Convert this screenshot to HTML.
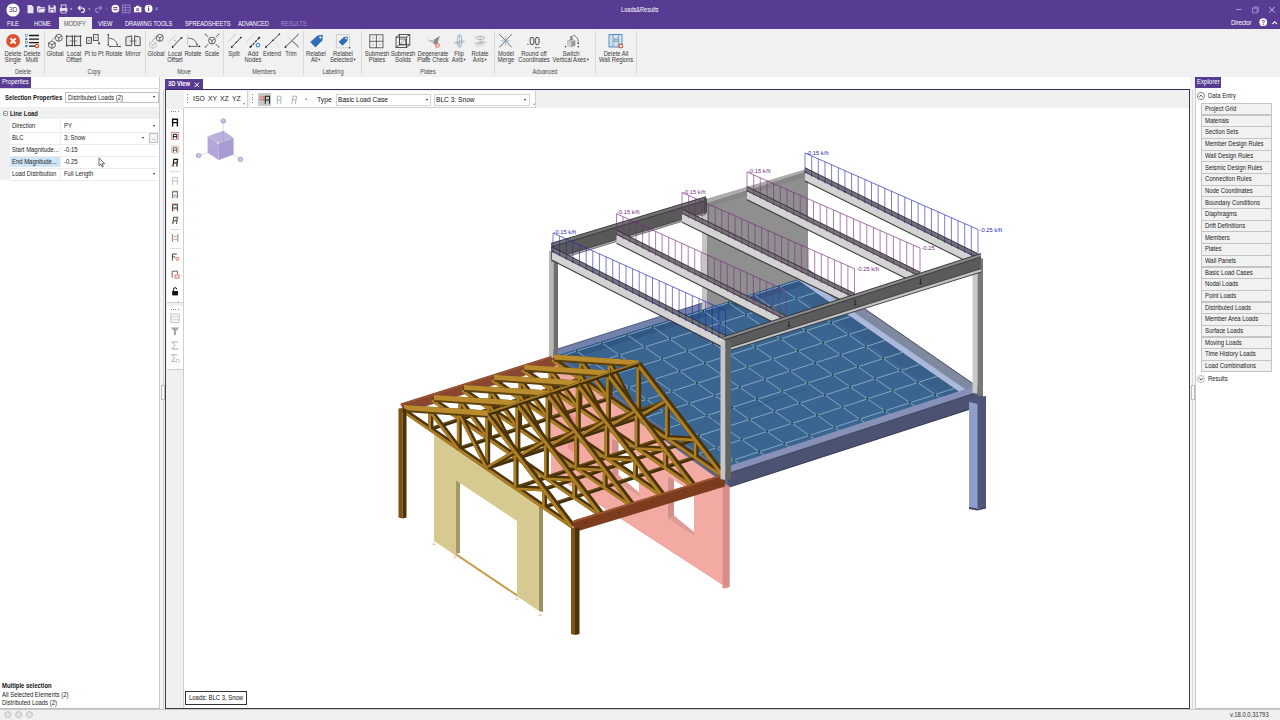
<!DOCTYPE html>
<html lang="en">
<head>
<meta charset="utf-8">
<title>Loads&amp;Results</title>
<style>
*{box-sizing:border-box;margin:0;padding:0}
html,body{width:1280px;height:720px;overflow:hidden;background:#f0f0f0;font-family:"Liberation Sans",sans-serif;color:#3c3c3c}
.abs{position:absolute}
#app{position:relative;width:1280px;height:720px;overflow:hidden;background:#f0f0f0}
#titlebar{position:absolute;left:0;top:0;width:1280px;height:28.5px;background:#583b93}
#title{position:absolute;left:0;width:1280px;top:5.8px;text-align:center;font-size:6.5px;color:#fff;line-height:8px}
.tab{position:absolute;top:19px;height:9px;font-size:6.6px;line-height:9px;color:#fff;white-space:nowrap;letter-spacing:-0.1px;transform-origin:0 50%}
#tabmod{position:absolute;left:59px;top:17px;width:33px;height:12px;background:#f1f1f1}
#ribbon{position:absolute;left:0;top:28.5px;width:1280px;height:47.5px;background:#f1f1f1}
.rl{position:absolute;font-size:6.8px;line-height:6.8px;color:#383838;text-align:center;white-space:nowrap;transform:translateX(-50%)}
.gl{position:absolute;top:68.2px;font-size:6.7px;line-height:7px;color:#4a4a4a;text-align:center;white-space:nowrap;transform:translateX(-50%)}
.sep{position:absolute;top:31px;width:1px;height:44px;background:#dadada}
.ico{position:absolute;overflow:visible}
#below{position:absolute;left:0;top:76px;width:1280px;height:634px;background:#f0f0f0}
#props{position:absolute;left:0;top:77px;width:160px;height:632px;background:#fff;border-right:1px solid #c9c9c9;border-bottom:1px solid #bdbdbd}
.ptab{position:absolute;background:#583b93;color:#fff;font-size:7px;line-height:10px;height:11px;padding-left:2px;white-space:nowrap}
.pt{position:absolute;font-size:6.8px;line-height:8px;color:#222;white-space:nowrap}
.b{font-weight:bold}
.rowline{position:absolute;left:10px;width:148px;height:1px;background:#ececec}
.arr{position:absolute;width:0;height:0;border-left:1.6px solid transparent;border-right:1.6px solid transparent;border-top:2px solid #222}
#view{position:absolute;left:165px;top:77px;width:1025px;height:632px;background:#fff}
#explorer{position:absolute;left:1195px;top:77px;width:85px;height:632px;background:#fff;border-left:1px solid #c9c9c9;border-bottom:1px solid #bdbdbd}
.ei{position:absolute;left:6px;width:71px;height:12px;background:#f0f0f0;border:1px solid #c6c6c6;font-size:6.1px;line-height:10.5px;padding-left:3px;color:#222;white-space:nowrap;overflow:hidden}
#status{position:absolute;left:0;top:710px;width:1280px;height:10px;background:#f0f0f0}
</style>
</head>
<body>
<div id="app">

<div id="titlebar">
<div id="title"><span style="display:inline-block;transform:scaleX(.86)">Loads&amp;Results</span></div>
<svg class="ico" style="left:6px;top:3px" width="14" height="14" viewBox="0 0 14 14"><circle cx="7" cy="7" r="6.6" fill="#fff"/><text x="7" y="9.4" font-size="6.6" text-anchor="middle" fill="#4a3580" font-family="Liberation Sans, sans-serif" textLength="8.6" lengthAdjust="spacingAndGlyphs">3D</text></svg>
<svg class="ico" style="left:24px;top:3px" width="70" height="14" viewBox="24 3 70 14">
<path d="M27.5 5h4l2 2v6.3h-6z" fill="#e6e0f0"/>
<path d="M37 6.2h3l.8 1h4v1H39l-1.6 4.4H37z" fill="#e6e0f0"/><path d="M39.4 8.8h6.2l-1.5 3.8h-6.2z" fill="#e6e0f0"/>
<path d="M48.4 5.2h6.4l1 1v6.4h-7.4z" fill="#e6e0f0"/><rect x="50" y="5.2" width="3.6" height="2.3" fill="#583b93"/><rect x="49.8" y="9.2" width="4.6" height="3.4" fill="#583b93"/><rect x="50.4" y="9.8" width="3.4" height="2.8" fill="#e6e0f0"/>
<rect x="59.8" y="8" width="7.6" height="3.6" rx=".6" fill="#e6e0f0"/><rect x="61.2" y="5" width="4.8" height="3.4" fill="none" stroke="#e6e0f0" stroke-width=".9"/><rect x="61.2" y="10.4" width="4.8" height="2.6" fill="#583b93" stroke="#e6e0f0" stroke-width=".8"/>
<path d="M69.8 8.6h2.6l-1.3 1.5z" fill="#e6e0f0"/>
<path d="M80.5 5.8l-2.2 2.2 2.2 2.2M78.6 8h3.6a2.1 2.1 0 0 1 0 4.3h-1" fill="none" stroke="#fff" stroke-width="1.2"/>
<path d="M88.2 8.6h2.2l-1.1 1.3z" fill="#e6e0f0"/>
</svg>
<svg class="ico" style="left:94px;top:3px" width="70" height="14" viewBox="94 3 70 14">
<path d="M99.5 5.8l2.2 2.2-2.2 2.2M101.4 8h-3.6a2.1 2.1 0 0 0 0 4.3h1" fill="none" stroke="#9a86c4" stroke-width="1.2"/>
<path d="M105.6 8.8h1.8l-.9 1.1z" fill="#9a86c4"/>
<circle cx="115.4" cy="8.7" r="3.9" fill="#fff"/><rect x="113.2" y="7.2" width="4.4" height="1" fill="#583b93"/><rect x="113.2" y="9.2" width="4.4" height="1" fill="#583b93"/>
<rect x="122.6" y="5" width="7.4" height="7.8" fill="none" stroke="#a794cc" stroke-width=".8"/><path d="M122.6 7.6h7.4M122.6 10.2h7.4M125.4 5v7.8" stroke="#a794cc" stroke-width=".7"/>
<path d="M134 7h1.6l.8-1.2h2.6l.8 1.2h1.6v5.2H134z" fill="#fff"/><circle cx="137.7" cy="9.5" r="1.5" fill="#583b93"/><circle cx="137.7" cy="9.5" r=".7" fill="#fff"/>
<circle cx="148.6" cy="8.7" r="3.9" fill="#fff"/><rect x="148" y="8" width="1.2" height="3" fill="#583b93"/><rect x="148" y="6.2" width="1.2" height="1.2" fill="#583b93"/>
<path d="M155.6 8h2.2M155.6 9.6h2.2" stroke="#d8d0ea" stroke-width=".7"/>
</svg>
<svg class="ico" style="left:1230px;top:4px" width="50" height="26" viewBox="1230 4 50 26">
<path d="M1236 9.5h5.6" stroke="#a895cf" stroke-width="1"/>
<path d="M1252.6 8.2h4.6v4.6h-4.6zM1253.8 8.2v-1.2h4.6v4.6h-1.2" fill="none" stroke="#a895cf" stroke-width=".9"/>
<path d="M1269.2 7l5.4 5.4M1274.6 7l-5.4 5.4" stroke="#c9bbe6" stroke-width="1"/>
<circle cx="1263.2" cy="22.2" r="3.9" fill="#fff"/>
<text x="1263.2" y="24.6" font-size="6.4" font-weight="bold" text-anchor="middle" fill="#583b93" font-family="Liberation Sans, sans-serif">?</text>
<path d="M1272.4 24l2.3-2.3 2.3 2.3" fill="none" stroke="#fff" stroke-width="1.1"/>
</svg>
<div class="tab" style="left:1230.8px;top:18px;transform:scaleX(.92)">Director</div>
<div id="tabmod"></div>
<div class="tab" style="left:6.5px;color:#fff;transform:scaleX(.87)">FILE</div>
<div class="tab" style="left:33.5px;color:#fff;transform:scaleX(.87)">HOME</div>
<div class="tab" style="left:63.5px;color:#555;transform:scaleX(.87)">MODIFY</div>
<div class="tab" style="left:97.5px;color:#fff;transform:scaleX(.87)">VIEW</div>
<div class="tab" style="left:125px;color:#fff;transform:scaleX(.87)">DRAWING TOOLS</div>
<div class="tab" style="left:184.5px;color:#fff;transform:scaleX(.87)">SPREADSHEETS</div>
<div class="tab" style="left:238px;color:#fff;transform:scaleX(.87)">ADVANCED</div>
<div class="tab" style="left:281px;color:#a693cc;transform:scaleX(.87)">RESULTS</div>
</div>
<div id="ribbon"></div>
<div class="sep" style="left:44px"></div>
<div class="sep" style="left:144.5px"></div>
<div class="sep" style="left:222.5px"></div>
<div class="sep" style="left:302.5px"></div>
<div class="sep" style="left:361px"></div>
<div class="sep" style="left:493.5px"></div>
<div class="sep" style="left:595px"></div>
<div class="sep" style="left:636px"></div>
<div class="rl" style="left:13px;top:50.6px;transform:translateX(-50%) scaleX(.86)">Delete<br>Single</div>
<div class="rl" style="left:32.2px;top:50.6px;transform:translateX(-50%) scaleX(.86)">Delete<br>Multi</div>
<div class="rl" style="left:55px;top:50.6px;transform:translateX(-50%) scaleX(.86)">Global</div>
<div class="rl" style="left:73.5px;top:50.6px;transform:translateX(-50%) scaleX(.86)">Local<br>Offset</div>
<div class="rl" style="left:93.7px;top:50.6px;transform:translateX(-50%) scaleX(.86)">Pt to Pt</div>
<div class="rl" style="left:114px;top:50.6px;transform:translateX(-50%) scaleX(.86)">Rotate</div>
<div class="rl" style="left:133px;top:50.6px;transform:translateX(-50%) scaleX(.86)">Mirror</div>
<div class="rl" style="left:156px;top:50.6px;transform:translateX(-50%) scaleX(.86)">Global</div>
<div class="rl" style="left:174.6px;top:50.6px;transform:translateX(-50%) scaleX(.86)">Local<br>Offset</div>
<div class="rl" style="left:193.4px;top:50.6px;transform:translateX(-50%) scaleX(.86)">Rotate</div>
<div class="rl" style="left:212px;top:50.6px;transform:translateX(-50%) scaleX(.86)">Scale</div>
<div class="rl" style="left:234.3px;top:50.6px;transform:translateX(-50%) scaleX(.86)">Split</div>
<div class="rl" style="left:253px;top:50.6px;transform:translateX(-50%) scaleX(.86)">Add<br>Nodes</div>
<div class="rl" style="left:272.4px;top:50.6px;transform:translateX(-50%) scaleX(.86)">Extend</div>
<div class="rl" style="left:291.4px;top:50.6px;transform:translateX(-50%) scaleX(.86)">Trim</div>
<div class="rl" style="left:316.2px;top:50.6px;transform:translateX(-50%) scaleX(.86)">Relabel<br>All<span style="font-size:4px;vertical-align:1px">&#9660;</span></div>
<div class="rl" style="left:342.8px;top:50.6px;transform:translateX(-50%) scaleX(.86)">Relabel<br>Selected<span style="font-size:4px;vertical-align:1px">&#9660;</span></div>
<div class="rl" style="left:376.8px;top:50.6px;transform:translateX(-50%) scaleX(.86)">Submesh<br>Plates</div>
<div class="rl" style="left:403px;top:50.6px;transform:translateX(-50%) scaleX(.86)">Submesh<br>Solids</div>
<div class="rl" style="left:432.6px;top:50.6px;transform:translateX(-50%) scaleX(.86)">Degenerate<br>Plate Check</div>
<div class="rl" style="left:459.4px;top:50.6px;transform:translateX(-50%) scaleX(.86)">Flip<br>Axis<span style="font-size:4px;vertical-align:1px">&#9660;</span></div>
<div class="rl" style="left:480px;top:50.6px;transform:translateX(-50%) scaleX(.86)">Rotate<br>Axis<span style="font-size:4px;vertical-align:1px">&#9660;</span></div>
<div class="rl" style="left:505.6px;top:50.6px;transform:translateX(-50%) scaleX(.86)">Model<br>Merge</div>
<div class="rl" style="left:533.5px;top:50.6px;transform:translateX(-50%) scaleX(.86)">Round off<br>Coordinates</div>
<div class="rl" style="left:571.3px;top:50.6px;transform:translateX(-50%) scaleX(.86)">Switch<br>Vertical Axes<span style="font-size:4px;vertical-align:1px">&#9660;</span></div>
<div class="rl" style="left:615.5px;top:50.6px;transform:translateX(-50%) scaleX(.86)">Delete All<br>Wall Regions</div>
<div class="gl" style="left:22.8px;transform:translateX(-50%) scaleX(0.84)">Delete</div>
<div class="gl" style="left:94px;transform:translateX(-50%) scaleX(0.84)">Copy</div>
<div class="gl" style="left:184px;transform:translateX(-50%) scaleX(0.84)">Move</div>
<div class="gl" style="left:263.5px;transform:translateX(-50%) scaleX(0.84)">Members</div>
<div class="gl" style="left:332.5px;transform:translateX(-50%) scaleX(0.84)">Labeling</div>
<div class="gl" style="left:427.8px;transform:translateX(-50%) scaleX(0.84)">Plates</div>
<div class="gl" style="left:544.7px;transform:translateX(-50%) scaleX(0.84)">Advanced</div>
<svg class="ico" style="left:0;top:29px" width="640" height="22" viewBox="0 29 640 22" fill="none" stroke-linecap="butt">
<!-- Delete single -->
<circle cx="13.1" cy="40.9" r="6.9" fill="#dc5330"/>
<path d="M10.5 38.3l5.2 5.2M15.7 38.3l-5.2 5.2" stroke="#fff" stroke-width="1.9"/>
<!-- Delete multi -->
<g stroke="#1a1a1a" stroke-width="1.3"><path d="M29 35.5h10M29 39.2h10M29 42.6h10M29 46.1h6"/></g>
<rect x="25.3" y="34.5" width="2" height="2" stroke="#5a7a96" stroke-width=".6" fill="#fff"/><rect x="25.3" y="38.2" width="2" height="2" fill="#2a6a9a"/>
<rect x="25.3" y="41.6" width="2" height="2" stroke="#5a7a96" stroke-width=".6" fill="#fff"/><rect x="25.3" y="45.1" width="2" height="2" fill="#2a6a9a"/>
<circle cx="36.9" cy="46" r="1.7" fill="#fff" stroke="#dc5330" stroke-width="1.2"/>
<!-- Global (copy) -->
<g stroke="#444" stroke-width=".8">
<path d="M51.9 41l3.3 1.9v3.7l-3.3 1.9-3.3-1.9v-3.7zM48.6 42.9l3.3 1.8 3.3-1.8M51.9 44.7v3.8"/>
<circle cx="58.8" cy="37.8" r="3.5"/><path d="M56 36l2.8 1.8 2.8-1.8M58.8 37.8v3.4"/>
<path d="M51.5 40.2l3.8-3" stroke-dasharray="1 .8"/>
</g>
<!-- Local offset (copy) -->
<g stroke="#444" stroke-width=".9"><rect x="66.6" y="36.2" width="5.8" height="9.4" fill="#e4e6ea"/><rect x="74.6" y="36.2" width="6" height="9.4" fill="#e4e6ea"/><path d="M70 41h7" stroke-width=".6"/></g>
<g fill="#333"><rect x="65.9" y="35.5" width="1.4" height="1.4"/><rect x="71.7" y="35.5" width="1.4" height="1.4"/><rect x="65.9" y="44.9" width="1.4" height="1.4"/><rect x="71.7" y="44.9" width="1.4" height="1.4"/><rect x="73.9" y="35.5" width="1.4" height="1.4"/><rect x="79.9" y="35.5" width="1.4" height="1.4"/><rect x="73.9" y="44.9" width="1.4" height="1.4"/><rect x="79.9" y="44.9" width="1.4" height="1.4"/></g>
<!-- Pt to Pt -->
<g stroke="#444" stroke-width=".9"><rect x="86.6" y="37.4" width="4.8" height="6" fill="#dcdfe4"/><rect x="93.4" y="34.6" width="4.8" height="5.8" fill="#eef0f3"/></g>
<circle cx="89" cy="40.4" r=".5" fill="#333"/><circle cx="95.8" cy="37.5" r=".5" fill="#333"/>
<path d="M98 41l2.6 3.2-1.3-.1-.4 1.2z" fill="#111"/>
<!-- Rotate (copy) -->
<g stroke="#444" stroke-width=".8"><path d="M108.3 34.8v10.2M109.8 46.5h10.2M108.6 38.2c4.4 0 8.4 3 8.6 6.6"/></g>
<g fill="#333"><circle cx="108.3" cy="34.9" r=".8"/><circle cx="108.3" cy="44.9" r=".8"/><circle cx="110" cy="46.5" r=".8"/><circle cx="120" cy="46.5" r=".8"/><path d="M116.2 44.2l1.9-.2-.8 1.7z"/></g>
<!-- Mirror -->
<g stroke="#444" stroke-width=".9"><path d="M125.9 37.2l5.8-1.4v9.8h-5.8zM134.6 35.8l5.6 1.4v8.4h-5.6z" fill="#e4e6ea"/><path d="M129.5 41h7" stroke-width=".6"/></g>
<!-- Global (move) -->
<g stroke="#bcbcbc" stroke-width=".8"><path d="M152.9 41l3.3 1.9v3.7l-3.3 1.9-3.3-1.9v-3.7zM149.6 42.9l3.3 1.8 3.3-1.8M152.9 44.7v3.8"/></g>
<g stroke="#444" stroke-width=".8"><circle cx="159.8" cy="37.8" r="3.5"/><path d="M157 36l2.8 1.8 2.8-1.8M159.8 37.8v3.4"/><path d="M152.5 40.2l3.8-3" stroke-dasharray="1 .8"/></g>
<!-- Local offset (move) -->
<path d="M168.2 42.6l8.6-9" stroke="#bdbdbd" stroke-width=".7"/>
<path d="M172.6 47l8.8-9.2" stroke="#333" stroke-width=".9"/><circle cx="172.6" cy="47" r=".9" fill="#222"/><circle cx="181.4" cy="37.8" r=".9" fill="#222"/>
<path d="M174 39.6l1.6 1.6" stroke="#555" stroke-width=".6"/>
<!-- Rotate (move) -->
<path d="M187.6 34.8v10.6" stroke="#bdbdbd" stroke-width=".8"/>
<g stroke="#444" stroke-width=".8"><path d="M189.4 46.4h10.4M188.4 38.2c4.4 0 8.4 3 8.6 6.6"/></g>
<g fill="#333"><circle cx="189.6" cy="46.4" r=".8"/><circle cx="199.6" cy="46.4" r=".8"/><path d="M196 44.2l1.9-.2-.8 1.7z"/></g>
<!-- Scale -->
<g stroke="#444" stroke-width=".8"><circle cx="212" cy="40.6" r="3.4"/><path d="M209.4 39l2.6 1.6 2.6-1.6M212 40.6v3.2"/><path d="M205.4 34.2l3 3M218.8 34.2l-3 3M205.4 47l3-3M218.8 47l-3-3"/></g>
<g fill="#2a6aa8"><circle cx="205.4" cy="34.2" r=".7"/><circle cx="218.8" cy="34.2" r=".7"/><circle cx="205.4" cy="47" r=".7"/><circle cx="218.8" cy="47" r=".7"/></g>
<!-- Split -->
<path d="M227.6 42.4l8.6-9" stroke="#bdbdbd" stroke-width=".7"/>
<path d="M231.8 47l9-9.4" stroke="#333" stroke-width=".9"/><circle cx="231.8" cy="47" r=".9" fill="#222"/><circle cx="240.8" cy="37.6" r=".9" fill="#222"/><circle cx="236.3" cy="42.3" r=".7" fill="#222"/>
<!-- Add nodes -->
<path d="M246.2 42.4l8.6-9" stroke="#bdbdbd" stroke-width=".7"/>
<path d="M250.4 47l9-9.4" stroke="#222" stroke-width="1.2" stroke-dasharray="2.4 1"/><circle cx="250.4" cy="47" r=".9" fill="#222"/><circle cx="259.4" cy="37.6" r=".9" fill="#222"/>
<rect x="256.4" y="43.6" width="3.2" height="3.2" rx=".6" fill="#fff" stroke="#2a7ad0" stroke-width="1"/>
<!-- Extend -->
<path d="M266 47l13.6-13" stroke="#333" stroke-width=".9"/><path d="M273 40l6.4 7.4" stroke="#c4c4c4" stroke-width=".7"/><circle cx="266" cy="47" r=".9" fill="#222"/><circle cx="273" cy="40.3" r=".8" fill="#222"/><circle cx="279.4" cy="34.2" r=".8" fill="#222"/>
<!-- Trim -->
<path d="M285.4 47l13.4-13" stroke="#333" stroke-width=".9"/><path d="M292 40.6l6.8 6.6" stroke="#333" stroke-width=".9"/><path d="M287 35.4l5 5.2" stroke="#c4c4c4" stroke-width=".7"/><circle cx="285.4" cy="47" r=".9" fill="#222"/>
<!-- Relabel All -->
<path d="M310.2 42l7.4-6.6 5.2-.6-.4 5.6-7 7z" fill="#2f6db6"/><circle cx="320.4" cy="37.4" r="1.1" fill="#fff"/>
<!-- Relabel Selected -->
<rect x="336.4" y="34.6" width="13.2" height="13.2" stroke="#777" stroke-width=".6" stroke-dasharray=".8 .8"/>
<path d="M338.6 41.8l5.4-4.8 3.8-.4-.3 4.2-5 5z" fill="#2f6db6"/><circle cx="346" cy="38.4" r=".8" fill="#fff"/><circle cx="349.6" cy="47.8" r=".7" fill="#333"/>
<!-- Submesh plates -->
<g stroke="#444" stroke-width=".8"><rect x="369.8" y="34.8" width="13.2" height="13"/><path d="M376.4 34.8v13M369.8 41.3h13.2"/></g>
<g stroke="#888" stroke-width=".5"><path d="M372.4 37.4l1.4 1.4M373.8 37.4l-1.4 1.4M379 37.4l1.4 1.4M380.4 37.4l-1.4 1.4M372.4 43.8l1.4 1.4M373.8 43.8l-1.4 1.4M379 43.8l1.4 1.4M380.4 43.8l-1.4 1.4"/></g>
<!-- Submesh solids -->
<g stroke="#333" stroke-width=".8"><rect x="396" y="37.2" width="10.4" height="10.4"/><rect x="399.4" y="34.4" width="10.4" height="10.4"/><path d="M396 37.2l3.4-2.8M406.4 37.2l3.4-2.8M396 47.6l3.4-2.8M406.4 47.6l3.4-2.8"/><rect x="399.6" y="39" width="5.8" height="5.8" stroke-width=".6"/><path d="M399.6 44.8l5.8-5.8" stroke-width=".5"/></g>
<!-- Degenerate plate check -->
<path d="M427 39.6c3 .8 5.6 1 7.6-.4l5.2-3.2-3 9.400z" fill="#8a8a8a"/><path d="M427 39.600c3 .8 5.600 1 7.600-.4l-1.200 4z" fill="#c8c8c8"/>
<circle cx="437.400" cy="45.400" r="1.900" fill="#fff" stroke="#dc5330" stroke-width=".9"/><path d="M436.200 46.600l2.400-2.400" stroke="#dc5330" stroke-width=".7"/>
<!-- Flip axis -->
<path d="M452.600 42.600l9-2.400 4.600 1.600-9 2.600z" fill="#c9c9c9"/><ellipse cx="459.600" cy="41" rx="2.200" ry="6.400" stroke="#7aa3c8" stroke-width=".8"/><path d="M459.600 35v12" stroke="#999" stroke-width=".5"/>
<!-- Rotate axis -->
<path d="M473.600 43.200l9-2.400 4.600 1.600-9 2.600z" fill="#c9c9c9"/><path d="M474.800 45.800l7.800-2 3 .9-7.800 2.200z" fill="#dedede"/><ellipse cx="480.200" cy="37.800" rx="4.600" ry="1.600" stroke="#999" stroke-width=".7"/><path d="M480.200 36v8" stroke="#999" stroke-width=".5"/>
<!-- Model merge -->
<g stroke="#333" stroke-width=".7"><path d="M499.400 34.200l12.400 13.200M511.800 34.200l-12.400 13.200"/></g><g stroke="#7aa3c8" stroke-width=".6"><path d="M505.600 35.600v10.600M500.600 40.800h10"/></g>
<!-- Round off -->
<text x="533.200" y="45" font-size="11" text-anchor="middle" fill="#333" stroke="none" font-family="Liberation Sans, sans-serif" textLength="13.500" lengthAdjust="spacingAndGlyphs">.00</text>
<path d="M535 47.600h5.400M535 47.600l1.400-1M535 47.600l1.400 1" stroke="#555" stroke-width=".6"/>
<!-- Switch vertical axes -->
<path d="M567.400 40.600l4-1.600 4 1.600v4.800l-4 1.800-4-1.800z" fill="#9a9a9a"/><path d="M567.400 40.600l4 1.600v5l-4-1.800z" fill="#d0d0d0"/><path d="M567.400 40.600l4-1.600 4 1.600-4 1.600z" fill="#bdbdbd"/><rect x="570.200" y="36" width="2.400" height="4" fill="#888"/>
<path d="M573 35.200c3.400.600 5.600 3.800 5.200 8" stroke="#444" stroke-width=".7"/><path d="M577.200 43l1 1.600 1-1.800z" fill="#333"/><circle cx="565.600" cy="46.800" r=".8" fill="#333"/><circle cx="578.400" cy="46.800" r=".8" fill="#333"/>
<!-- Delete all wall regions -->
<rect x="609" y="34.600" width="13" height="12.400" fill="#cfe3f3" stroke="#3a78b4" stroke-width=".8"/><path d="M613 34.600v12.400M618.400 34.600v12.400" stroke="#3a78b4" stroke-width=".6"/><rect x="614.200" y="39" width="3" height="2.600" stroke="#555" stroke-width=".5"/>
<circle cx="620.800" cy="46" r="1.800" fill="#fff" stroke="#dc5330" stroke-width="1.200"/>
</svg>

<div id="below"></div>
<div id="props"></div>
<div class="ptab" style="left:0;top:77px;width:31px"><span style="display:inline-block;transform:scaleX(.84);transform-origin:0 50%">Properties</span></div>
<div class="abs" style="left:0;top:88px;width:160px;height:1px;background:#dcdcdc"></div>
<div class="pt b" style="left:5px;top:93.5px;transform:scaleX(0.87);transform-origin:0 50%;color:#111">Selection Properties</div>
<div class="abs" style="left:65px;top:92px;width:93.5px;height:11px;border:1px solid #c2c2c2;background:#fff"></div>
<div class="pt" style="left:68px;top:93.8px;transform:scaleX(0.87);transform-origin:0 50%;">Distributed Loads (2)</div>
<div class="arr" style="left:153.4px;top:96.4px"></div>
<div class="abs" style="left:0;top:107px;width:159px;height:12px;background:#f0f0f0"></div>
<div class="abs" style="left:0;top:119px;width:10px;height:61px;background:#f0f0f0"></div>
<div class="abs" style="left:3px;top:110.6px;width:4.6px;height:5.2px;border:.8px solid #9a9a9a;border-radius:1px;background:#f7f7f7"></div><div class="abs" style="left:4.2px;top:112.9px;width:2.2px;height:.7px;background:#888"></div>
<div class="pt b" style="left:10px;top:110px;transform:scaleX(0.87);transform-origin:0 50%;color:#222">Line Load</div>
<div class="abs" style="left:10px;top:156px;width:50px;height:11px;background:#cde5f7"></div>
<div class="pt" style="left:12px;top:121.8px;transform:scaleX(0.87);transform-origin:0 50%;">Direction</div>
<div class="pt" style="left:63.5px;top:121.8px;transform:scaleX(0.87);transform-origin:0 50%;">PY</div>
<div class="pt" style="left:12px;top:133.60000000000002px;transform:scaleX(0.87);transform-origin:0 50%;">BLC</div>
<div class="pt" style="left:63.5px;top:133.60000000000002px;transform:scaleX(0.87);transform-origin:0 50%;">3: Snow</div>
<div class="pt" style="left:12px;top:145.60000000000002px;transform:scaleX(0.87);transform-origin:0 50%;">Start Magnitude...</div>
<div class="pt" style="left:63.5px;top:145.60000000000002px;transform:scaleX(0.87);transform-origin:0 50%;">-0.15</div>
<div class="pt" style="left:12px;top:157.60000000000002px;transform:scaleX(0.87);transform-origin:0 50%;">End Magnitude...</div>
<div class="pt" style="left:63.5px;top:157.60000000000002px;transform:scaleX(0.87);transform-origin:0 50%;">-0.25</div>
<div class="pt" style="left:12px;top:169.60000000000002px;transform:scaleX(0.87);transform-origin:0 50%;">Load Distribution</div>
<div class="pt" style="left:63.5px;top:169.60000000000002px;transform:scaleX(0.87);transform-origin:0 50%;">Full Length</div>
<div class="rowline" style="top:131.5px"></div>
<div class="rowline" style="top:143.5px"></div>
<div class="rowline" style="top:155.5px"></div>
<div class="rowline" style="top:167.5px"></div>
<div class="rowline" style="top:179.5px"></div>
<div class="abs" style="left:60px;top:119px;width:1px;height:61px;background:#f0f0f0"></div>
<div class="arr" style="left:153.4px;top:125.4px"></div>
<div class="arr" style="left:142.2px;top:137.2px"></div>
<div class="arr" style="left:153.4px;top:173.2px"></div>
<div class="abs" style="left:149px;top:133px;width:9px;height:9.5px;border:1px solid #bdbdbd;background:#f4f4f4;font-size:5px;line-height:8px;text-align:center;color:#333">...</div>
<svg class="ico" style="left:98px;top:157px" width="8" height="11" viewBox="0 0 8 11"><path d="M1 .8v8l1.900-1.700 1.300 2.900 1.200-.5-1.300-2.800h2.500z" fill="#fff" stroke="#333" stroke-width=".7"/></svg>
<div class="pt b" style="left:2px;top:681.5px;transform:scaleX(0.87);transform-origin:0 50%;color:#111">Multiple selection</div>
<div class="pt" style="left:2px;top:690.9px;transform:scaleX(0.87);transform-origin:0 50%;">All Selected Elements (2)</div>
<div class="pt" style="left:2px;top:699px;transform:scaleX(0.87);transform-origin:0 50%;">Distributed Loads (2)</div>
<div class="abs" style="left:160px;top:77px;width:5px;height:633px;background:#f4f4f4"></div>
<div class="abs" style="left:162.600px;top:90px;width:1.400px;height:619px;background:#d4d0e4"></div>
<div class="abs" style="left:160.500px;top:385px;width:4px;height:15px;background:#fafafa;border:1px solid #bcbcbc"></div>
<div class="abs" style="left:1190px;top:77px;width:5px;height:633px;background:#f4f4f4"></div>
<div class="abs" style="left:1192px;top:90px;width:1.400px;height:619px;background:#d9d9d9"></div>
<div class="abs" style="left:1190.500px;top:385px;width:4px;height:15px;background:#fafafa;border:1px solid #bcbcbc"></div>
<div id="explorer"></div>
<div class="ptab" style="left:1195px;top:77px;width:25.500px"><span style="display:inline-block;transform:scaleX(.87);transform-origin:0 50%">Explorer</span></div>
<svg class="ico" style="left:1196px;top:91px" width="10" height="10" viewBox="0 0 10 10"><circle cx="5" cy="5" r="3.600" fill="#fff" stroke="#555" stroke-width=".7"/><path d="M3.300 5.900l1.700-1.700 1.700 1.700" fill="none" stroke="#222" stroke-width=".9"/></svg>
<div class="pt" style="left:1208px;top:92px;transform:scaleX(0.87);transform-origin:0 50%;color:#222">Data Entry</div>
<div class="abs" style="left:1201px;top:103.00px;width:70.500px;height:12.48px;background:#f1f1f1;border:1px solid #c4c4c4"></div>
<div class="pt" style="left:1204.6px;top:105.1px;transform:scaleX(0.87);transform-origin:0 50%;color:#222">Project Grid</div>
<div class="abs" style="left:1201px;top:114.68px;width:70.500px;height:12.48px;background:#f1f1f1;border:1px solid #c4c4c4"></div>
<div class="pt" style="left:1204.6px;top:116.78px;transform:scaleX(0.87);transform-origin:0 50%;color:#222">Materials</div>
<div class="abs" style="left:1201px;top:126.36px;width:70.500px;height:12.48px;background:#f1f1f1;border:1px solid #c4c4c4"></div>
<div class="pt" style="left:1204.6px;top:128.46px;transform:scaleX(0.87);transform-origin:0 50%;color:#222">Section Sets</div>
<div class="abs" style="left:1201px;top:138.04px;width:70.500px;height:12.48px;background:#f1f1f1;border:1px solid #c4c4c4"></div>
<div class="pt" style="left:1204.6px;top:140.14px;transform:scaleX(0.87);transform-origin:0 50%;color:#222">Member Design Rules</div>
<div class="abs" style="left:1201px;top:149.72px;width:70.500px;height:12.48px;background:#f1f1f1;border:1px solid #c4c4c4"></div>
<div class="pt" style="left:1204.6px;top:151.82px;transform:scaleX(0.87);transform-origin:0 50%;color:#222">Wall Design Rules</div>
<div class="abs" style="left:1201px;top:161.40px;width:70.500px;height:12.48px;background:#f1f1f1;border:1px solid #c4c4c4"></div>
<div class="pt" style="left:1204.6px;top:163.5px;transform:scaleX(0.87);transform-origin:0 50%;color:#222">Seismic Design Rules</div>
<div class="abs" style="left:1201px;top:173.08px;width:70.500px;height:12.48px;background:#f1f1f1;border:1px solid #c4c4c4"></div>
<div class="pt" style="left:1204.6px;top:175.18px;transform:scaleX(0.87);transform-origin:0 50%;color:#222">Connection Rules</div>
<div class="abs" style="left:1201px;top:184.76px;width:70.500px;height:12.48px;background:#f1f1f1;border:1px solid #c4c4c4"></div>
<div class="pt" style="left:1204.6px;top:186.86px;transform:scaleX(0.87);transform-origin:0 50%;color:#222">Node Coordinates</div>
<div class="abs" style="left:1201px;top:196.44px;width:70.500px;height:12.48px;background:#f1f1f1;border:1px solid #c4c4c4"></div>
<div class="pt" style="left:1204.6px;top:198.54px;transform:scaleX(0.87);transform-origin:0 50%;color:#222">Boundary Conditions</div>
<div class="abs" style="left:1201px;top:208.12px;width:70.500px;height:12.48px;background:#f1f1f1;border:1px solid #c4c4c4"></div>
<div class="pt" style="left:1204.6px;top:210.22px;transform:scaleX(0.87);transform-origin:0 50%;color:#222">Diaphragms</div>
<div class="abs" style="left:1201px;top:219.80px;width:70.500px;height:12.48px;background:#f1f1f1;border:1px solid #c4c4c4"></div>
<div class="pt" style="left:1204.6px;top:221.9px;transform:scaleX(0.87);transform-origin:0 50%;color:#222">Drift Definitions</div>
<div class="abs" style="left:1201px;top:231.48px;width:70.500px;height:12.48px;background:#f1f1f1;border:1px solid #c4c4c4"></div>
<div class="pt" style="left:1204.6px;top:233.58px;transform:scaleX(0.87);transform-origin:0 50%;color:#222">Members</div>
<div class="abs" style="left:1201px;top:243.16px;width:70.500px;height:12.48px;background:#f1f1f1;border:1px solid #c4c4c4"></div>
<div class="pt" style="left:1204.6px;top:245.26px;transform:scaleX(0.87);transform-origin:0 50%;color:#222">Plates</div>
<div class="abs" style="left:1201px;top:254.84px;width:70.500px;height:12.48px;background:#f1f1f1;border:1px solid #c4c4c4"></div>
<div class="pt" style="left:1204.6px;top:256.94px;transform:scaleX(0.87);transform-origin:0 50%;color:#222">Wall Panels</div>
<div class="abs" style="left:1201px;top:266.52px;width:70.500px;height:12.48px;background:#f1f1f1;border:1px solid #c4c4c4"></div>
<div class="pt" style="left:1204.6px;top:268.62px;transform:scaleX(0.87);transform-origin:0 50%;color:#222">Basic Load Cases</div>
<div class="abs" style="left:1201px;top:278.20px;width:70.500px;height:12.48px;background:#f1f1f1;border:1px solid #c4c4c4"></div>
<div class="pt" style="left:1204.6px;top:280.3px;transform:scaleX(0.87);transform-origin:0 50%;color:#222">Nodal Loads</div>
<div class="abs" style="left:1201px;top:289.88px;width:70.500px;height:12.48px;background:#f1f1f1;border:1px solid #c4c4c4"></div>
<div class="pt" style="left:1204.6px;top:291.98px;transform:scaleX(0.87);transform-origin:0 50%;color:#222">Point Loads</div>
<div class="abs" style="left:1201px;top:301.56px;width:70.500px;height:12.48px;background:#f1f1f1;border:1px solid #c4c4c4"></div>
<div class="pt" style="left:1204.6px;top:303.66px;transform:scaleX(0.87);transform-origin:0 50%;color:#222">Distributed Loads</div>
<div class="abs" style="left:1201px;top:313.24px;width:70.500px;height:12.48px;background:#f1f1f1;border:1px solid #c4c4c4"></div>
<div class="pt" style="left:1204.6px;top:315.34px;transform:scaleX(0.87);transform-origin:0 50%;color:#222">Member Area Loads</div>
<div class="abs" style="left:1201px;top:324.92px;width:70.500px;height:12.48px;background:#f1f1f1;border:1px solid #c4c4c4"></div>
<div class="pt" style="left:1204.6px;top:327.02px;transform:scaleX(0.87);transform-origin:0 50%;color:#222">Surface Loads</div>
<div class="abs" style="left:1201px;top:336.60px;width:70.500px;height:12.48px;background:#f1f1f1;border:1px solid #c4c4c4"></div>
<div class="pt" style="left:1204.6px;top:338.7px;transform:scaleX(0.87);transform-origin:0 50%;color:#222">Moving Loads</div>
<div class="abs" style="left:1201px;top:348.28px;width:70.500px;height:12.48px;background:#f1f1f1;border:1px solid #c4c4c4"></div>
<div class="pt" style="left:1204.6px;top:350.38px;transform:scaleX(0.87);transform-origin:0 50%;color:#222">Time History Loads</div>
<div class="abs" style="left:1201px;top:359.96px;width:70.500px;height:12.48px;background:#f1f1f1;border:1px solid #c4c4c4"></div>
<div class="pt" style="left:1204.6px;top:362.06px;transform:scaleX(0.87);transform-origin:0 50%;color:#222">Load Combinations</div>
<svg class="ico" style="left:1196px;top:373.500px" width="10" height="10" viewBox="0 0 10 10"><circle cx="5" cy="5" r="3.600" fill="#f4f4f4" stroke="#aaa" stroke-width=".7"/><path d="M3.300 4.300l1.700 1.700 1.700-1.700" fill="none" stroke="#444" stroke-width=".9"/></svg>
<div class="pt" style="left:1207.6px;top:374.5px;transform:scaleX(0.87);transform-origin:0 50%;color:#222">Results</div>
<div id="status"></div>
<div class="abs" style="left:0;top:709px;width:1280px;height:1px;background:#c8c8c8"></div>
<svg class="ico" style="left:0;top:710px" width="40" height="10" viewBox="0 0 40 10"><g fill="#e4e4e4" stroke="#b4b4b4" stroke-width=".8"><circle cx="7.800" cy="4.600" r="3"/><circle cx="18.600" cy="4.600" r="3"/><circle cx="29.400" cy="4.600" r="3"/></g></svg>
<div class="pt" style="left:1230px;top:710.6px;transform:scaleX(0.87);transform-origin:0 50%;color:#333">v.18.0.0.31793</div>
<div class="abs" style="left:165px;top:77px;width:1025px;height:13px;background:#fff"></div>
<div class="abs" style="left:165px;top:78.500px;width:37.500px;height:11px;background:#583b93"></div>
<div class="pt b" style="left:167.5px;top:79.6px;transform:scaleX(0.87);transform-origin:0 50%;color:#fff;font-size:6.600px">3D View</div>
<svg class="ico" style="left:192.500px;top:80.500px" width="8" height="8" viewBox="0 0 8 8"><path d="M1.600 1.600l4.400 4.400M6 1.600l-4.400 4.400" stroke="#fff" stroke-width="1"/></svg>
<div class="abs" style="left:165px;top:89px;width:1025px;height:1.600px;background:#3a2a5e"></div>
<div class="abs" style="left:165px;top:90px;width:1025px;height:619px;background:#f0f0f0;border:1.500px solid #3c3c46;border-top:none"></div>
<div class="abs" style="left:184px;top:108px;width:1004.500px;height:599.500px;background:#fff"></div>
<div class="abs" style="left:184px;top:91px;width:63.500px;height:16.500px;background:#fff;border-bottom:1px solid #d0d0d0;border-right:1px solid #d0d0d0"></div>
<div class="abs" style="left:249.500px;top:91px;width:286.500px;height:16.500px;background:#fff;border-bottom:1px solid #d0d0d0;border-right:1px solid #d0d0d0"></div>
<div class="abs" style="left:187.3px;top:94px;width:1px;height:10px;background:repeating-linear-gradient(#777 0 1px,transparent 1px 2.500px)"></div>
<div class="abs" style="left:252.3px;top:94px;width:1px;height:10px;background:repeating-linear-gradient(#777 0 1px,transparent 1px 2.500px)"></div>
<div class="pt" style="left:193.3px;top:95.4px;transform:scaleX(0.88);transform-origin:0 50%;font-size:7.800px;color:#222">ISO</div>
<div class="pt" style="left:208.4px;top:95.4px;transform:scaleX(0.88);transform-origin:0 50%;font-size:7.800px;color:#222">XY</div>
<div class="pt" style="left:220.3px;top:95.4px;transform:scaleX(0.88);transform-origin:0 50%;font-size:7.800px;color:#222">XZ</div>
<div class="pt" style="left:232px;top:95.4px;transform:scaleX(0.88);transform-origin:0 50%;font-size:7.800px;color:#222">YZ</div>
<div class="arr" style="left:243.300px;top:102.500px;border-top-color:#888"></div>
<div class="abs" style="left:257.500px;top:92.800px;width:13.500px;height:13.200px;background:#c9c9c9"></div>
<svg class="ico" style="left:257px;top:92px" width="55" height="14" viewBox="257 92 55 14" fill="none">
<path d="M265.300 103.800v-7.600h4.200v7.600M265.300 100h4.200" stroke="#222" stroke-width="1.100"/><path d="M259.400 97h5M259.400 99.600h5M263.300 96l1.200 1-1.200 1M263.300 98.600l1.200 1-1.200 1" stroke="#d04a3a" stroke-width=".7"/>
<path d="M277.300 103.800v-7.600h3.600v7.600M277.300 100h3.600" stroke="#9fb0aa" stroke-width=".9"/>
<path d="M291.800 103.800l1.200-7.600h3.600l-1.200 7.600M292.400 100h3.600" stroke="#a8a8a8" stroke-width=".9"/>
<path d="M305 98.800h2.200l-1.100 1.300z" fill="#444"/></svg>
<div class="pt" style="left:317px;top:95.6px;transform:scaleX(0.9);transform-origin:0 50%;font-size:7.600px;color:#222">Type</div>
<div class="abs" style="left:336px;top:93.600px;width:95px;height:12px;border:1px solid #d4d4d4;background:#fff"></div>
<div class="abs" style="left:433.800px;top:93.600px;width:96.500px;height:12px;border:1px solid #d4d4d4;background:#fff"></div>
<div class="pt" style="left:338px;top:95.7px;transform:scaleX(0.92);transform-origin:0 50%;font-size:7.200px;color:#111">Basic Load Case</div>
<div class="pt" style="left:436px;top:95.7px;transform:scaleX(0.92);transform-origin:0 50%;font-size:7.200px;color:#111">BLC 3: Snow</div>
<div class="arr" style="left:425.600px;top:98.600px"></div>
<div class="arr" style="left:523.800px;top:98.600px"></div>
<div class="abs" style="left:533px;top:103px;width:2px;height:2px;border-right:1px solid #bbb;border-bottom:1px solid #bbb"></div>
<div class="abs" style="left:167.300px;top:109px;width:15.300px;height:193.500px;background:#fff;border-bottom:1px solid #cfcfcf"></div>
<div class="abs" style="left:167.300px;top:306px;width:15.300px;height:64px;background:#fff;border-bottom:1px solid #cfcfcf"></div>
<div class="abs" style="left:182.600px;top:108px;width:1.400px;height:600px;background:#cfcfcf"></div>
<div class="abs" style="left:171px;top:111.3px;width:8px;height:1px;background:repeating-linear-gradient(90deg,#888 0 1px,transparent 1px 2.200px)"></div>
<div class="abs" style="left:171px;top:308.6px;width:8px;height:1px;background:repeating-linear-gradient(90deg,#888 0 1px,transparent 1px 2.200px)"></div>
<div class="abs" style="left:169.500px;top:171.2px;width:11px;height:1px;background:#dcdcdc"></div>
<div class="abs" style="left:169.500px;top:229px;width:11px;height:1px;background:#dcdcdc"></div>
<div class="abs" style="left:169.500px;top:247.5px;width:11px;height:1px;background:#dcdcdc"></div>
<svg class="ico" style="left:167px;top:109px" width="16" height="262" viewBox="167 109 16 262" fill="none"><path d="M172.6 126.39999999999999v-7.200h4.800v7.200M172.600 122.6h4.800" stroke="#111" stroke-width="1.4" fill="none"/><rect x="171.600" y="132.600" width="7" height="7" stroke="#d8705c" stroke-width=".7"/><path d="M173.300 138.600v-4.300h3.500v4.300M173.300 136.600h3.500" stroke="#111" stroke-width="1"/><rect x="171.600" y="146" width="7" height="7" rx="1.500" stroke="#d8906c" stroke-width=".7"/><path d="M173.300 152.400v-4.600h3.500v4.600M173.300 150.200h3.500" stroke="#444" stroke-width=".9"/><path d="M173 166.600l.8-7.200h3.800l-.8 7.200M173.400 163h3.800" stroke="#111" stroke-width="1.100"/><path d="M171.400 166l7-6" stroke="#c0503c" stroke-width=".6"/><path d="M172.6 184.79999999999998v-7.200h4.800v7.200M172.600 181.0h4.800" stroke="#b9b9b9" stroke-width="0.9" fill="none"/><path d="M171.800 191.200h6.600" stroke="#d8705c" stroke-width=".7"/><path d="M172.600 198.200v-6.400h4.800v6.400" stroke="#555" stroke-width=".9"/><path d="M174 198v-3h2v3" stroke="#777" stroke-width=".6"/><path d="M171.800 204h6.600" stroke="#d8503c" stroke-width=".8"/><path d="M172.600 211.200v-6.400h4.800v6.400M172.600 208h4.800" stroke="#333" stroke-width="1"/><path d="M174 211l1.600-3" stroke="#d8503c" stroke-width=".6"/><path d="M172.800 224l.8-6.800h3.800l-.8 6.800M173.200 220.800h3.800" stroke="#444" stroke-width="1"/><path d="M171.600 223.600l7-6.600" stroke="#c0503c" stroke-width=".6"/><path d="M172.400 234v8M177.800 234v8" stroke="#666" stroke-width=".8"/><path d="M173.400 236.400h3.400M173.400 239.600h3.400" stroke="#d8503c" stroke-width=".6"/><path d="M172.400 260.600v-6.600h4.400M172.400 257h3" stroke="#444" stroke-width="1"/><circle cx="177.400" cy="258.800" r="1.500" fill="#fff" stroke="#d8503c" stroke-width=".8"/><path d="M172.200 277.600v-6.400h5.200v3" stroke="#555" stroke-width=".9"/><rect x="175" y="275" width="4" height="3.200" stroke="#c0503c" stroke-width=".7" fill="#fbe9e4"/><rect x="172.200" y="291" width="5.800" height="4.400" fill="#111"/><path d="M173.400 291v-1.600a1.700 1.700 0 0 1 3.400 0" stroke="#111" stroke-width="1"/><path d="M178 301l1.200.7-1.200.7z" fill="#aaa"/><path d="M178 368.400l1.200.7-1.200.7z" fill="#aaa"/><rect x="170.800" y="314" width="8.400" height="8.400" stroke="#b4b4b4" stroke-width=".7" fill="#f4f4f4"/><path d="M170.800 316.800h8.400M170.800 319.600h8.400" stroke="#c4c4c4" stroke-width=".6"/><path d="M170.800 327.600h8.400l-3.200 3.600v3.600l-2 .8v-4.400z" fill="#a8a8a8"/><path d="M178.200 342h-6.400l3.200 3.400-3.200 3.600h6.600" stroke="#a0a0a0" stroke-width=".9"/><path d="M177.400 354.800h-5.800l3 3.200-3 3.400h4" stroke="#a8a8a8" stroke-width=".9"/><rect x="176.400" y="359.600" width="3" height="2.400" stroke="#b4b4b4" stroke-width=".5"/></svg>
<svg class="ico" style="left:190px;top:114px" width="60" height="52" viewBox="190 114 60 52">
<g stroke="#c8c4d8" stroke-width=".6"><path d="M223.300 123.500v8M207.600 152.800l-7 2.400M233.400 154.400l5.400 3.800"/></g>
<path d="M223.300 131L233.400 138v16.400L218.600 159.900 207.600 152.800V136.400z" fill="#b3a7d9"/>
<path d="M207.600 136.400L223.300 131 233.400 138 218 143z" fill="#bcb1de"/>
<path d="M218 143L233.400 138v16.400L218.600 159.900z" fill="#a99cd3"/>
<g stroke="#d9d2ee" stroke-width=".6" fill="none"><path d="M207.600 136.400L218 143l15.400-5M218 143l.6 16.900"/></g>
<g stroke="#9f92cc" stroke-width=".4" fill="none"><path d="M223.300 131v14.600l-15.700 7.200M223.300 145.600l10.100 8.800"/></g>
<circle cx="218" cy="143" r="1.100" fill="#f3e6a8"/>
<g fill="#b9afdc" stroke="#9c90c8" stroke-width=".5"><circle cx="223.300" cy="121" r="2.400"/><circle cx="198.600" cy="155.600" r="2.400"/><circle cx="240.500" cy="159.400" r="2.400"/></g>
<g font-size="3" fill="#fff" text-anchor="middle" font-family="Liberation Sans, sans-serif"><text x="223.300" y="122.100">Y</text><text x="198.600" y="156.700">Z</text><text x="240.500" y="160.500">X</text></g>
</svg>
<div class="abs" style="left:185px;top:690.500px;width:62px;height:14.500px;background:#fff;border:1px solid #333"></div>
<div class="pt" style="left:189.3px;top:693.6px;transform:scaleX(0.9);transform-origin:0 50%;font-size:6.600px;color:#111">Loads: BLC 3, Snow</div>
<svg class="ico" style="left:184px;top:108px" width="1004.5" height="599.5" viewBox="184 108 1004.5 599.5" font-family="Liberation Sans, sans-serif">
<polygon points="551.0,351.0 808.0,269.5 983.0,390.5 728.0,473.5" fill="#7484ab" />
<polygon points="797.2,272.9 808.0,269.5 983.0,390.5 972.3,394.0" fill="#7f899f" />
<polygon points="790.3,275.1 797.2,272.9 972.3,394.0 965.4,396.2" fill="#aab8d9" />
<polygon points="551.0,351.0 790.3,275.1 796.7,279.6 557.5,355.5" fill="#7282aa" />
<polygon points="557.5,355.5 796.7,279.6 958.6,391.5 721.1,468.7" fill="#3a6591" />
<polygon points="782.6,284.1 796.7,279.6 958.6,391.5 944.5,396.1" fill="#375f8a" />
<polygon points="557.5,355.5 796.7,279.6 816.0,292.9 577.0,369.0" fill="#39638f" />
<polygon points="557.5,355.5 796.7,279.6 804.6,285.1 565.5,361.0" fill="#315785" />
<polygon points="721.1,468.7 976.2,385.8 983.0,390.5 728.0,473.5" fill="#8791b8" />
<polygon points="551.0,351.0 728.0,473.5 728.0,487.5 551.0,359.0" fill="#5b6585" />
<polygon points="728.0,473.5 983.0,390.5 983.0,405.0 728.0,487.5" fill="#4c5272" />
<line x1="728.0" y1="473.5" x2="983.0" y2="390.5" stroke="#2e3350" stroke-width="0.8" />
<line x1="728.0" y1="487.5" x2="983.0" y2="405.0" stroke="#2a2e48" stroke-width="0.9" />
<line x1="808.0" y1="269.5" x2="983.0" y2="390.5" stroke="#3a4058" stroke-width="0.8" />
<line x1="551.0" y1="351.0" x2="808.0" y2="269.5" stroke="#3a4666" stroke-width="0.7" />
<g stroke="#93b7cf" stroke-width="0.8" fill="none">
<line x1="575.1" y1="350.0" x2="738.5" y2="463.1" stroke="#93b7cf" stroke-width="0.8" />
<line x1="600.4" y1="341.9" x2="763.7" y2="454.9" stroke="#93b7cf" stroke-width="0.8" />
<line x1="625.7" y1="333.9" x2="788.8" y2="446.7" stroke="#93b7cf" stroke-width="0.8" />
<line x1="651.0" y1="325.9" x2="813.9" y2="438.5" stroke="#93b7cf" stroke-width="0.8" />
<line x1="676.3" y1="317.8" x2="839.0" y2="430.4" stroke="#93b7cf" stroke-width="0.8" />
<line x1="701.7" y1="309.8" x2="864.2" y2="422.2" stroke="#93b7cf" stroke-width="0.8" />
<line x1="727.0" y1="301.8" x2="889.3" y2="414.0" stroke="#93b7cf" stroke-width="0.8" />
<line x1="752.3" y1="293.7" x2="914.4" y2="405.9" stroke="#93b7cf" stroke-width="0.8" />
<line x1="777.6" y1="285.7" x2="939.6" y2="397.7" stroke="#93b7cf" stroke-width="0.8" />
<line x1="559.1" y1="356.6" x2="798.3" y2="280.7" stroke="#93b7cf" stroke-width="0.8" />
<line x1="576.6" y1="368.7" x2="815.6" y2="292.6" stroke="#93b7cf" stroke-width="0.8" />
<line x1="594.1" y1="380.8" x2="832.9" y2="304.6" stroke="#93b7cf" stroke-width="0.8" />
<line x1="611.6" y1="392.9" x2="850.2" y2="316.6" stroke="#93b7cf" stroke-width="0.8" />
<line x1="629.1" y1="405.0" x2="867.5" y2="328.5" stroke="#93b7cf" stroke-width="0.8" />
<line x1="646.6" y1="417.1" x2="884.8" y2="340.5" stroke="#93b7cf" stroke-width="0.8" />
<line x1="664.1" y1="429.3" x2="902.1" y2="352.5" stroke="#93b7cf" stroke-width="0.8" />
<line x1="681.6" y1="441.4" x2="919.5" y2="364.5" stroke="#93b7cf" stroke-width="0.8" />
<line x1="699.0" y1="453.5" x2="936.8" y2="376.4" stroke="#93b7cf" stroke-width="0.8" />
<line x1="716.5" y1="465.6" x2="954.1" y2="388.4" stroke="#93b7cf" stroke-width="0.8" />
</g>
<g fill="#1d4a40">
<circle cx="576.7" cy="351.0" r="1.1"/>
<circle cx="594.1" cy="363.1" r="1.1"/>
<circle cx="611.6" cy="375.2" r="1.1"/>
<circle cx="629.1" cy="387.3" r="1.1"/>
<circle cx="646.6" cy="399.4" r="1.1"/>
<circle cx="664.1" cy="411.5" r="1.1"/>
<circle cx="681.5" cy="423.6" r="1.1"/>
<circle cx="699.0" cy="435.7" r="1.1"/>
<circle cx="716.5" cy="447.8" r="1.1"/>
<circle cx="734.0" cy="459.9" r="1.1"/>
<circle cx="602.0" cy="343.0" r="1.1"/>
<circle cx="619.4" cy="355.1" r="1.1"/>
<circle cx="636.9" cy="367.2" r="1.1"/>
<circle cx="654.4" cy="379.3" r="1.1"/>
<circle cx="671.8" cy="391.3" r="1.1"/>
<circle cx="689.3" cy="403.4" r="1.1"/>
<circle cx="706.7" cy="415.5" r="1.1"/>
<circle cx="724.2" cy="427.6" r="1.1"/>
<circle cx="741.6" cy="439.7" r="1.1"/>
<circle cx="759.1" cy="451.7" r="1.1"/>
<circle cx="627.3" cy="335.0" r="1.1"/>
<circle cx="644.7" cy="347.0" r="1.1"/>
<circle cx="662.2" cy="359.1" r="1.1"/>
<circle cx="679.6" cy="371.2" r="1.1"/>
<circle cx="697.0" cy="383.2" r="1.1"/>
<circle cx="714.5" cy="395.3" r="1.1"/>
<circle cx="731.9" cy="407.4" r="1.1"/>
<circle cx="749.4" cy="419.4" r="1.1"/>
<circle cx="766.8" cy="431.5" r="1.1"/>
<circle cx="784.2" cy="443.6" r="1.1"/>
<circle cx="652.6" cy="326.9" r="1.1"/>
<circle cx="670.0" cy="339.0" r="1.1"/>
<circle cx="687.4" cy="351.0" r="1.1"/>
<circle cx="704.9" cy="363.1" r="1.1"/>
<circle cx="722.3" cy="375.1" r="1.1"/>
<circle cx="739.7" cy="387.2" r="1.1"/>
<circle cx="757.1" cy="399.2" r="1.1"/>
<circle cx="774.5" cy="411.3" r="1.1"/>
<circle cx="792.0" cy="423.4" r="1.1"/>
<circle cx="809.4" cy="435.4" r="1.1"/>
<circle cx="677.9" cy="318.9" r="1.1"/>
<circle cx="695.3" cy="330.9" r="1.1"/>
<circle cx="712.7" cy="343.0" r="1.1"/>
<circle cx="730.1" cy="355.0" r="1.1"/>
<circle cx="747.5" cy="367.0" r="1.1"/>
<circle cx="764.9" cy="379.1" r="1.1"/>
<circle cx="782.3" cy="391.1" r="1.1"/>
<circle cx="799.7" cy="403.2" r="1.1"/>
<circle cx="817.1" cy="415.2" r="1.1"/>
<circle cx="834.5" cy="427.2" r="1.1"/>
<circle cx="703.2" cy="310.9" r="1.1"/>
<circle cx="720.6" cy="322.9" r="1.1"/>
<circle cx="738.0" cy="334.9" r="1.1"/>
<circle cx="755.4" cy="346.9" r="1.1"/>
<circle cx="772.7" cy="359.0" r="1.1"/>
<circle cx="790.1" cy="371.0" r="1.1"/>
<circle cx="807.5" cy="383.0" r="1.1"/>
<circle cx="824.9" cy="395.0" r="1.1"/>
<circle cx="842.3" cy="407.0" r="1.1"/>
<circle cx="859.6" cy="419.1" r="1.1"/>
<circle cx="728.5" cy="302.8" r="1.1"/>
<circle cx="745.9" cy="314.8" r="1.1"/>
<circle cx="763.2" cy="326.8" r="1.1"/>
<circle cx="780.6" cy="338.9" r="1.1"/>
<circle cx="798.0" cy="350.9" r="1.1"/>
<circle cx="815.3" cy="362.9" r="1.1"/>
<circle cx="832.7" cy="374.9" r="1.1"/>
<circle cx="850.1" cy="386.9" r="1.1"/>
<circle cx="867.4" cy="398.9" r="1.1"/>
<circle cx="884.8" cy="410.9" r="1.1"/>
<circle cx="753.8" cy="294.8" r="1.1"/>
<circle cx="771.2" cy="306.8" r="1.1"/>
<circle cx="788.5" cy="318.8" r="1.1"/>
<circle cx="805.9" cy="330.8" r="1.1"/>
<circle cx="823.2" cy="342.8" r="1.1"/>
<circle cx="840.5" cy="354.8" r="1.1"/>
<circle cx="857.9" cy="366.8" r="1.1"/>
<circle cx="875.2" cy="378.7" r="1.1"/>
<circle cx="892.6" cy="390.7" r="1.1"/>
<circle cx="909.9" cy="402.7" r="1.1"/>
<circle cx="779.1" cy="286.8" r="1.1"/>
<circle cx="796.5" cy="298.7" r="1.1"/>
<circle cx="813.8" cy="310.7" r="1.1"/>
<circle cx="831.1" cy="322.7" r="1.1"/>
<circle cx="848.4" cy="334.7" r="1.1"/>
<circle cx="865.8" cy="346.7" r="1.1"/>
<circle cx="883.1" cy="358.6" r="1.1"/>
<circle cx="900.4" cy="370.6" r="1.1"/>
<circle cx="917.7" cy="382.6" r="1.1"/>
<circle cx="935.0" cy="394.6" r="1.1"/>
</g>
<line x1="742.5" y1="410.0" x2="806.0" y2="389.0" stroke="#2f5478" stroke-width="0.8" />
<line x1="702.0" y1="422.5" x2="727.0" y2="415.0" stroke="#2f5478" stroke-width="0.7" />
<polygon points="702.0,204.0 808.0,171.0 808.0,276.0 702.0,309.7" fill="#8f8f8f" />
<polygon points="702.0,204.0 707.0,203.0 707.0,308.1 702.0,309.7" fill="#c4c4c4" />
<polygon points="702.0,204.0 805.0,172.0 808.0,168.5 706.0,199.0" fill="#ababab" />
<polygon points="707.0,203.0 808.0,171.0 808.0,176.0 707.0,208.0" fill="#868686" />
<polygon points="969.0,399.0 986.0,396.0 986.0,508.0 969.0,508.0" fill="#4e5679" />
<polygon points="969.0,402.0 977.5,404.0 977.5,509.0 969.0,508.0" fill="#909dca" />
<polygon points="969.0,507.0 977.5,508.5 986.0,507.0 986.0,508.5 977.5,510.5 969.0,509.0" fill="#3e4560" />
<polygon points="551.0,359.0 728.0,486.0 728.0,588.0 551.0,473.0" fill="#f3aaa2" />
<polygon points="722.5,484.0 729.7,486.0 729.7,587.0 722.5,588.5" fill="#d98d88" />
<polygon points="611.7,438.0 639.0,456.0 639.0,496.5 611.7,478.5" fill="#ffffff" />
<polygon points="611.7,438.0 618.5,442.0 618.5,477.0 611.7,478.5" fill="#d58f8a" />
<polygon points="611.7,478.5 618.5,475.0 639.0,492.5 639.0,496.5" fill="#e09a94" />
<polygon points="667.5,476.0 694.0,493.0 694.0,536.0 667.5,518.7" fill="#ffffff" />
<polygon points="667.5,476.0 674.0,480.0 674.0,516.5 667.5,518.7" fill="#d58f8a" />
<polygon points="667.5,518.7 674.0,515.5 694.0,532.0 694.0,536.0" fill="#e09a94" />
<polygon points="568.0,412.0 578.0,418.5 578.0,455.0 568.0,448.5" fill="#e9928c" />
<line x1="551.0" y1="473.0" x2="728.0" y2="588.0" stroke="#e59a92" stroke-width="0.8" />
<polygon points="434.0,434.0 539.0,503.0 539.0,611.0 434.0,541.0" fill="#d7ca90" />
<polygon points="539.0,503.0 543.0,505.0 543.0,612.0 539.0,611.0" fill="#9a915e" />
<polygon points="456.0,480.5 517.0,521.0 517.0,595.0 456.0,553.7" fill="#ffffff" />
<polygon points="456.0,480.5 460.0,483.0 460.0,553.0 456.0,553.7" fill="#a39a66" />
<line x1="456.0" y1="554.3" x2="517.0" y2="595.3" stroke="#c79a4a" stroke-width="1.8" />
<path d="M432.4 544.6h3.200M434 542v2.600" stroke="#e2a070" stroke-width=".6" fill="none"/>
<path d="M453.4 557.6h3.200M455 555v2.600" stroke="#e2a070" stroke-width=".6" fill="none"/>
<path d="M515.4 599.6h3.200M517 597v2.600" stroke="#e2a070" stroke-width=".6" fill="none"/>
<path d="M538.4 615.6h3.200M540 613v2.600" stroke="#e2a070" stroke-width=".6" fill="none"/>
<polygon points="549.0,251.0 553.5,251.0 553.5,358.0 549.0,358.0" fill="#b8b8b8" />
<polygon points="553.5,251.0 558.0,251.0 558.0,356.0 553.5,356.0" fill="#6e6e6e" />
<polygon points="972.5,260.0 977.5,260.0 977.5,394.0 972.5,393.0" fill="#c9c9c9" />
<polygon points="977.5,260.0 983.0,258.0 983.0,396.0 977.5,396.0" fill="#777777" />
<polygon points="400.5,403.5 551.0,356.0 556.0,366.0 404.0,413.0" fill="#8a4630" />
<polygon points="400.5,404.0 551.0,356.5 551.3,358.0 400.8,405.6" fill="#9a5630" />
<polygon points="580.7,376.8 550.6,386.9 551.8,390.4 581.8,380.3" fill="#3f2d07" />
<polygon points="580.7,376.8 550.6,386.9 551.1,388.3 581.1,378.2" fill="#6e5014" />
<polygon points="609.4,396.4 579.3,406.5 580.5,410.0 610.6,399.9" fill="#3f2d07" />
<polygon points="609.4,396.4 579.3,406.5 579.7,407.9 609.9,397.8" fill="#6e5014" />
<polygon points="638.2,416.0 608.0,426.0 609.1,429.6 639.3,419.5" fill="#3f2d07" />
<polygon points="638.2,416.0 608.0,426.0 608.4,427.4 638.6,417.4" fill="#6e5014" />
<polygon points="666.9,435.6 636.6,445.6 637.8,449.1 668.1,439.1" fill="#3f2d07" />
<polygon points="666.9,435.6 636.6,445.6 637.1,447.0 667.4,437.0" fill="#6e5014" />
<polygon points="695.7,455.2 665.3,465.2 666.5,468.7 696.8,458.7" fill="#3f2d07" />
<polygon points="695.7,455.2 665.3,465.2 665.8,466.6 696.1,456.6" fill="#6e5014" />
<polygon points="666.9,399.6 636.6,409.6 637.8,413.1 668.1,403.1" fill="#3f2d07" />
<polygon points="666.9,399.6 636.6,409.6 637.1,411.0 667.4,401.0" fill="#6e5014" />
<polygon points="695.7,437.2 665.3,447.2 666.5,450.7 696.8,440.7" fill="#3f2d07" />
<polygon points="695.7,437.2 665.3,447.2 665.8,448.6 696.1,438.6" fill="#6e5014" />
<polygon points="551.0,361.2 723.5,478.7 726.5,474.3 554.0,356.8" fill="#4d3408" />
<polygon points="551.0,361.2 723.5,478.7 725.1,476.4 552.6,358.9" fill="#ae8025" />
<polygon points="578.8,360.6 578.8,378.6 583.7,378.6 583.7,360.6" fill="#4d3408" />
<polygon points="578.8,360.6 578.8,378.6 581.3,378.6 581.3,360.6" fill="#ae8025" />
<polygon points="607.5,362.2 607.5,398.2 612.5,398.2 612.5,362.2" fill="#4d3408" />
<polygon points="607.5,362.2 607.5,398.2 610.1,398.2 610.1,362.2" fill="#ae8025" />
<polygon points="636.3,363.8 636.3,417.8 641.2,417.8 641.2,363.8" fill="#4d3408" />
<polygon points="636.3,363.8 636.3,417.8 638.8,417.8 638.8,363.8" fill="#ae8025" />
<polygon points="665.0,401.3 665.0,437.3 670.0,437.3 670.0,401.3" fill="#4d3408" />
<polygon points="665.0,401.3 665.0,437.3 667.6,437.3 667.6,401.3" fill="#ae8025" />
<polygon points="693.8,438.9 693.8,456.9 698.7,456.9 698.7,438.9" fill="#4d3408" />
<polygon points="693.8,438.9 693.8,456.9 696.3,456.9 696.3,438.9" fill="#ae8025" />
<polygon points="579.3,362.1 608.0,399.7 612.0,396.7 583.2,359.1" fill="#4d3408" />
<polygon points="579.3,362.1 608.0,399.7 610.1,398.1 581.3,360.5" fill="#ae8025" />
<polygon points="607.8,363.3 636.5,418.9 641.0,416.6 612.2,361.0" fill="#4d3408" />
<polygon points="607.8,363.3 636.5,418.9 638.8,417.7 610.1,362.1" fill="#ae8025" />
<polygon points="637.5,415.6 666.3,399.2 668.7,403.5 640.0,419.9" fill="#4d3408" />
<polygon points="637.5,415.6 666.3,399.2 667.5,401.4 638.8,417.8" fill="#ae8025" />
<polygon points="667.4,439.8 696.1,441.4 696.4,436.4 667.6,434.9" fill="#4d3408" />
<polygon points="667.4,439.8 696.1,441.4 696.3,438.8 667.5,437.2" fill="#ae8025" />
<polygon points="636.4,365.6 722.6,478.3 727.4,474.7 641.1,361.9" fill="#4d3408" />
<polygon points="636.4,365.6 722.6,478.3 725.1,476.4 638.8,363.7" fill="#ae8025" />
<polygon points="554.0,354.6 638.8,360.4 638.8,367.6 554.0,361.4" fill="#5a400e" />
<polygon points="554.0,354.6 638.8,360.4 638.8,365.6 554.0,359.5" fill="#ba8b2c" />
<polygon points="638.1,361.9 607.9,371.9 609.2,375.7 639.4,365.6" fill="#3f2d07" />
<polygon points="638.1,361.9 607.9,371.9 608.5,373.6 638.7,363.6" fill="#a87c24" />
<polygon points="550.6,386.9 520.5,397.0 521.7,400.5 551.8,390.4" fill="#3f2d07" />
<polygon points="550.6,386.9 520.5,397.0 521.0,398.4 551.1,388.3" fill="#6e5014" />
<polygon points="579.3,406.5 549.1,416.5 550.3,420.1 580.5,410.0" fill="#3f2d07" />
<polygon points="579.3,406.5 549.1,416.5 549.6,417.9 579.7,407.9" fill="#6e5014" />
<polygon points="608.0,426.0 577.8,436.1 578.9,439.6 609.1,429.6" fill="#3f2d07" />
<polygon points="608.0,426.0 577.8,436.1 578.2,437.5 608.4,427.4" fill="#6e5014" />
<polygon points="636.6,445.6 606.4,455.6 607.6,459.2 637.8,449.1" fill="#3f2d07" />
<polygon points="636.6,445.6 606.4,455.6 606.8,457.0 637.1,447.0" fill="#6e5014" />
<polygon points="665.3,465.2 635.0,475.2 636.2,478.7 666.5,468.7" fill="#3f2d07" />
<polygon points="665.3,465.2 635.0,475.2 635.5,476.6 665.8,466.6" fill="#6e5014" />
<polygon points="636.6,409.6 606.4,419.6 607.6,423.2 637.8,413.1" fill="#3f2d07" />
<polygon points="636.6,409.6 606.4,419.6 606.8,421.0 637.1,411.0" fill="#6e5014" />
<polygon points="665.3,447.2 635.0,457.2 636.2,460.7 666.5,450.7" fill="#3f2d07" />
<polygon points="665.3,447.2 635.0,457.2 635.5,458.6 665.8,448.6" fill="#6e5014" />
<polygon points="521.0,371.3 693.1,488.7 696.1,484.3 524.0,366.9" fill="#4d3408" />
<polygon points="521.0,371.3 693.1,488.7 694.7,486.4 522.6,369.0" fill="#ae8025" />
<polygon points="548.7,370.7 548.7,388.7 553.7,388.7 553.7,370.7" fill="#4d3408" />
<polygon points="548.7,370.7 548.7,388.7 551.3,388.7 551.3,370.7" fill="#ae8025" />
<polygon points="577.4,372.2 577.4,408.2 582.3,408.2 582.3,372.2" fill="#4d3408" />
<polygon points="577.4,372.2 577.4,408.2 580.0,408.2 580.0,372.2" fill="#ae8025" />
<polygon points="606.1,373.8 606.1,427.8 611.0,427.8 611.0,373.8" fill="#4d3408" />
<polygon points="606.1,373.8 606.1,427.8 608.6,427.8 608.6,373.8" fill="#ae8025" />
<polygon points="634.8,411.4 634.8,447.4 639.7,447.4 639.7,411.4" fill="#4d3408" />
<polygon points="634.8,411.4 634.8,447.4 637.3,447.4 637.3,411.4" fill="#ae8025" />
<polygon points="663.4,448.9 663.4,466.9 668.4,466.9 668.4,448.9" fill="#4d3408" />
<polygon points="663.4,448.9 663.4,466.9 666.0,466.9 666.0,448.9" fill="#ae8025" />
<polygon points="549.2,372.2 577.9,409.7 581.8,406.7 553.2,369.2" fill="#4d3408" />
<polygon points="549.2,372.2 577.9,409.7 579.9,408.2 551.3,370.6" fill="#ae8025" />
<polygon points="577.7,373.4 606.3,428.9 610.8,426.7 582.1,371.1" fill="#4d3408" />
<polygon points="577.7,373.4 606.3,428.9 608.6,427.8 580.0,372.2" fill="#ae8025" />
<polygon points="607.3,425.6 636.0,409.2 638.5,413.5 609.8,430.0" fill="#4d3408" />
<polygon points="607.3,425.6 636.0,409.2 637.3,411.5 608.6,427.9" fill="#ae8025" />
<polygon points="637.1,449.8 665.8,451.4 666.1,446.5 637.4,444.9" fill="#4d3408" />
<polygon points="637.1,449.8 665.8,451.4 665.9,448.8 637.2,447.3" fill="#ae8025" />
<polygon points="606.2,375.6 692.2,488.3 697.0,484.7 610.9,372.0" fill="#4d3408" />
<polygon points="606.2,375.6 692.2,488.3 694.7,486.4 608.6,373.7" fill="#ae8025" />
<polygon points="524.0,364.7 608.5,370.4 608.5,377.6 524.0,371.5" fill="#5a400e" />
<polygon points="524.0,364.7 608.5,370.4 608.5,375.7 524.0,369.6" fill="#ba8b2c" />
<polygon points="607.9,371.9 577.7,382.0 579.0,385.7 609.2,375.7" fill="#3f2d07" />
<polygon points="607.9,371.9 577.7,382.0 578.3,383.7 608.5,373.6" fill="#a87c24" />
<polygon points="520.5,397.0 490.5,407.1 491.6,410.6 521.7,400.5" fill="#3f2d07" />
<polygon points="520.5,397.0 490.5,407.1 490.9,408.5 521.0,398.4" fill="#6e5014" />
<polygon points="549.1,416.5 519.0,426.6 520.2,430.1 550.3,420.1" fill="#3f2d07" />
<polygon points="549.1,416.5 519.0,426.6 519.5,428.0 549.6,417.9" fill="#6e5014" />
<polygon points="577.8,436.1 547.6,446.1 548.7,449.7 578.9,439.6" fill="#3f2d07" />
<polygon points="577.8,436.1 547.6,446.1 548.0,447.5 578.2,437.5" fill="#6e5014" />
<polygon points="606.4,455.6 576.1,465.7 577.3,469.2 607.6,459.2" fill="#3f2d07" />
<polygon points="606.4,455.6 576.1,465.7 576.6,467.1 606.8,457.0" fill="#6e5014" />
<polygon points="635.0,475.2 604.7,485.2 605.8,488.7 636.2,478.7" fill="#3f2d07" />
<polygon points="635.0,475.2 604.7,485.2 605.1,486.6 635.5,476.6" fill="#6e5014" />
<polygon points="606.4,419.6 576.1,429.7 577.3,433.2 607.6,423.2" fill="#3f2d07" />
<polygon points="606.4,419.6 576.1,429.7 576.6,431.1 606.8,421.0" fill="#6e5014" />
<polygon points="635.0,457.2 604.7,467.2 605.8,470.7 636.2,460.7" fill="#3f2d07" />
<polygon points="635.0,457.2 604.7,467.2 605.1,468.6 635.5,458.6" fill="#6e5014" />
<polygon points="491.0,381.4 662.7,498.7 665.7,494.3 494.0,377.0" fill="#4d3408" />
<polygon points="491.0,381.4 662.7,498.7 664.3,496.4 492.6,379.1" fill="#ae8025" />
<polygon points="518.6,380.8 518.6,398.8 523.6,398.8 523.6,380.8" fill="#4d3408" />
<polygon points="518.6,380.8 518.6,398.8 521.2,398.8 521.2,380.8" fill="#ae8025" />
<polygon points="547.3,382.3 547.3,418.3 552.2,418.3 552.2,382.3" fill="#4d3408" />
<polygon points="547.3,382.3 547.3,418.3 549.8,418.3 549.8,382.3" fill="#ae8025" />
<polygon points="575.9,383.9 575.9,437.9 580.8,437.9 580.8,383.9" fill="#4d3408" />
<polygon points="575.9,383.9 575.9,437.9 578.4,437.9 578.4,383.9" fill="#ae8025" />
<polygon points="604.5,421.4 604.5,457.4 609.4,457.4 609.4,421.4" fill="#4d3408" />
<polygon points="604.5,421.4 604.5,457.4 607.1,457.4 607.1,421.4" fill="#ae8025" />
<polygon points="633.1,458.9 633.1,476.9 638.1,476.9 638.1,458.9" fill="#4d3408" />
<polygon points="633.1,458.9 633.1,476.9 635.7,476.9 635.7,458.9" fill="#ae8025" />
<polygon points="519.1,382.3 547.8,419.8 551.7,416.8 523.1,379.2" fill="#4d3408" />
<polygon points="519.1,382.3 547.8,419.8 549.8,418.2 521.2,380.7" fill="#ae8025" />
<polygon points="547.5,383.4 576.1,439.0 580.6,436.7 551.9,381.2" fill="#4d3408" />
<polygon points="547.5,383.4 576.1,439.0 578.4,437.8 549.8,382.3" fill="#ae8025" />
<polygon points="577.1,435.7 605.7,419.2 608.2,423.6 579.6,440.0" fill="#4d3408" />
<polygon points="577.1,435.7 605.7,419.2 607.0,421.5 578.4,437.9" fill="#ae8025" />
<polygon points="606.8,459.9 635.4,461.4 635.7,456.5 607.1,454.9" fill="#4d3408" />
<polygon points="606.8,459.9 635.4,461.4 635.6,458.9 607.0,457.3" fill="#ae8025" />
<polygon points="576.0,385.7 661.8,498.3 666.6,494.7 580.7,382.0" fill="#4d3408" />
<polygon points="576.0,385.7 661.8,498.3 664.3,496.4 578.4,383.8" fill="#ae8025" />
<polygon points="494.0,374.8 578.4,380.5 578.4,387.7 494.0,381.6" fill="#5a400e" />
<polygon points="494.0,374.8 578.4,380.5 578.4,385.8 494.0,379.7" fill="#ba8b2c" />
<polygon points="577.7,382.0 547.5,392.0 548.8,395.8 579.0,385.7" fill="#3f2d07" />
<polygon points="577.7,382.0 547.5,392.0 548.1,393.7 578.3,383.7" fill="#a87c24" />
<polygon points="490.5,407.1 460.4,417.2 461.6,420.7 491.6,410.6" fill="#3f2d07" />
<polygon points="490.5,407.1 460.4,417.2 460.9,418.6 490.9,408.5" fill="#6e5014" />
<polygon points="519.0,426.6 488.9,436.7 490.1,440.2 520.2,430.1" fill="#3f2d07" />
<polygon points="519.0,426.6 488.9,436.7 489.3,438.1 519.5,428.0" fill="#6e5014" />
<polygon points="547.6,446.1 517.4,456.2 518.5,459.7 548.7,449.7" fill="#3f2d07" />
<polygon points="547.6,446.1 517.4,456.2 517.8,457.6 548.0,447.5" fill="#6e5014" />
<polygon points="576.1,465.7 545.8,475.7 547.0,479.2 577.3,469.2" fill="#3f2d07" />
<polygon points="576.1,465.7 545.8,475.7 546.3,477.1 576.6,467.1" fill="#6e5014" />
<polygon points="604.7,485.2 574.3,495.2 575.5,498.7 605.8,488.7" fill="#3f2d07" />
<polygon points="604.7,485.2 574.3,495.2 574.8,496.6 605.1,486.6" fill="#6e5014" />
<polygon points="576.1,429.7 545.8,439.7 547.0,443.2 577.3,433.2" fill="#3f2d07" />
<polygon points="576.1,429.7 545.8,439.7 546.3,441.1 576.6,431.1" fill="#6e5014" />
<polygon points="604.7,467.2 574.3,477.2 575.5,480.7 605.8,470.7" fill="#3f2d07" />
<polygon points="604.7,467.2 574.3,477.2 574.8,478.6 605.1,468.6" fill="#6e5014" />
<polygon points="461.0,391.4 632.3,508.6 635.3,504.4 464.0,387.2" fill="#4d3408" />
<polygon points="461.0,391.4 632.3,508.6 633.9,506.4 462.6,389.2" fill="#ae8025" />
<polygon points="488.6,390.8 488.6,408.8 493.5,408.8 493.5,390.8" fill="#4d3408" />
<polygon points="488.6,390.8 488.6,408.8 491.1,408.8 491.1,390.8" fill="#ae8025" />
<polygon points="517.1,392.4 517.1,428.4 522.1,428.4 522.1,392.4" fill="#4d3408" />
<polygon points="517.1,392.4 517.1,428.4 519.7,428.4 519.7,392.4" fill="#ae8025" />
<polygon points="545.7,393.9 545.7,447.9 550.6,447.9 550.6,393.9" fill="#4d3408" />
<polygon points="545.7,393.9 545.7,447.9 548.2,447.9 548.2,393.9" fill="#ae8025" />
<polygon points="574.2,431.4 574.2,467.4 579.2,467.4 579.2,431.4" fill="#4d3408" />
<polygon points="574.2,431.4 574.2,467.4 576.8,467.4 576.8,431.4" fill="#ae8025" />
<polygon points="602.8,469.0 602.8,487.0 607.7,487.0 607.7,469.0" fill="#4d3408" />
<polygon points="602.8,469.0 602.8,487.0 605.3,487.0 605.3,469.0" fill="#ae8025" />
<polygon points="489.1,392.3 517.6,429.9 521.6,426.9 493.0,389.3" fill="#4d3408" />
<polygon points="489.1,392.3 517.6,429.9 519.7,428.3 491.1,390.8" fill="#ae8025" />
<polygon points="517.4,393.5 545.9,449.0 550.4,446.8 521.8,391.2" fill="#4d3408" />
<polygon points="517.4,393.5 545.9,449.0 548.2,447.9 519.7,392.3" fill="#ae8025" />
<polygon points="546.9,445.8 575.5,429.3 577.9,433.6 549.4,450.0" fill="#4d3408" />
<polygon points="546.9,445.8 575.5,429.3 576.7,431.5 548.2,448.0" fill="#ae8025" />
<polygon points="576.6,469.9 605.1,471.4 605.4,466.5 576.8,465.0" fill="#4d3408" />
<polygon points="576.6,469.9 605.1,471.4 605.3,468.9 576.7,467.3" fill="#ae8025" />
<polygon points="545.8,395.7 631.4,508.3 636.2,504.7 550.5,392.1" fill="#4d3408" />
<polygon points="545.8,395.7 631.4,508.3 633.9,506.4 548.2,393.8" fill="#ae8025" />
<polygon points="464.0,384.9 548.1,390.5 548.1,397.7 464.0,391.7" fill="#5a400e" />
<polygon points="464.0,384.9 548.1,390.5 548.1,395.8 464.0,389.8" fill="#ba8b2c" />
<polygon points="547.5,392.0 517.3,402.1 518.6,405.8 548.8,395.8" fill="#3f2d07" />
<polygon points="547.5,392.0 517.3,402.1 517.9,403.8 548.1,393.7" fill="#a87c24" />
<polygon points="460.4,417.2 430.3,427.2 431.5,430.8 461.6,420.7" fill="#3f2d07" />
<polygon points="460.4,417.2 430.3,427.2 430.8,428.6 460.9,418.6" fill="#6e5014" />
<polygon points="488.9,436.7 458.7,446.7 459.9,450.3 490.1,440.2" fill="#3f2d07" />
<polygon points="488.9,436.7 458.7,446.7 459.2,448.1 489.3,438.1" fill="#6e5014" />
<polygon points="517.4,456.2 487.2,466.2 488.3,469.8 518.5,459.7" fill="#3f2d07" />
<polygon points="517.4,456.2 487.2,466.2 487.6,467.6 517.8,457.6" fill="#6e5014" />
<polygon points="545.8,475.7 515.6,485.7 516.8,489.3 547.0,479.2" fill="#3f2d07" />
<polygon points="545.8,475.7 515.6,485.7 516.0,487.1 546.3,477.1" fill="#6e5014" />
<polygon points="574.3,495.2 544.0,505.2 545.2,508.8 575.5,498.7" fill="#3f2d07" />
<polygon points="574.3,495.2 544.0,505.2 544.5,506.6 574.8,496.6" fill="#6e5014" />
<polygon points="545.8,439.7 515.6,449.7 516.8,453.3 547.0,443.2" fill="#3f2d07" />
<polygon points="545.8,439.7 515.6,449.7 516.0,451.1 546.3,441.1" fill="#6e5014" />
<polygon points="574.3,477.2 544.0,487.2 545.2,490.8 575.5,480.7" fill="#3f2d07" />
<polygon points="574.3,477.2 544.0,487.2 544.5,488.6 574.8,478.6" fill="#6e5014" />
<polygon points="431.0,401.5 601.9,518.6 604.9,514.4 434.0,397.3" fill="#4d3408" />
<polygon points="431.0,401.5 601.9,518.6 603.5,516.4 432.6,399.3" fill="#ae8025" />
<polygon points="458.5,400.9 458.5,418.9 463.5,418.9 463.5,400.9" fill="#4d3408" />
<polygon points="458.5,400.9 458.5,418.9 461.1,418.9 461.1,400.9" fill="#ae8025" />
<polygon points="487.0,402.4 487.0,438.4 491.9,438.4 491.9,402.4" fill="#4d3408" />
<polygon points="487.0,402.4 487.0,438.4 489.6,438.4 489.6,402.4" fill="#ae8025" />
<polygon points="515.5,403.9 515.5,457.9 520.4,457.9 520.4,403.9" fill="#4d3408" />
<polygon points="515.5,403.9 515.5,457.9 518.0,457.9 518.0,403.9" fill="#ae8025" />
<polygon points="544.0,441.5 544.0,477.5 548.9,477.5 548.9,441.5" fill="#4d3408" />
<polygon points="544.0,441.5 544.0,477.5 546.5,477.5 546.5,441.5" fill="#ae8025" />
<polygon points="572.4,479.0 572.4,497.0 577.4,497.0 577.4,479.0" fill="#4d3408" />
<polygon points="572.4,479.0 572.4,497.0 575.0,497.0 575.0,479.0" fill="#ae8025" />
<polygon points="459.0,402.4 487.5,439.9 491.4,436.9 463.0,399.4" fill="#4d3408" />
<polygon points="459.0,402.4 487.5,439.9 489.5,438.4 461.1,400.9" fill="#ae8025" />
<polygon points="487.3,403.6 515.7,459.1 520.2,456.8 491.7,401.3" fill="#4d3408" />
<polygon points="487.3,403.6 515.7,459.1 518.0,457.9 489.6,402.4" fill="#ae8025" />
<polygon points="516.7,455.8 545.2,439.3 547.7,443.6 519.2,460.1" fill="#4d3408" />
<polygon points="516.7,455.8 545.2,439.3 546.5,441.6 518.0,458.0" fill="#ae8025" />
<polygon points="546.3,479.9 574.8,481.5 575.0,476.5 546.6,475.0" fill="#4d3408" />
<polygon points="546.3,479.9 574.8,481.5 574.9,478.9 546.4,477.4" fill="#ae8025" />
<polygon points="515.6,405.7 601.0,518.3 605.8,514.7 520.3,402.2" fill="#4d3408" />
<polygon points="515.6,405.7 601.0,518.3 603.5,516.4 518.0,403.9" fill="#ae8025" />
<polygon points="434.0,395.0 518.0,400.6 518.0,407.8 434.0,401.8" fill="#5a400e" />
<polygon points="434.0,395.0 518.0,400.6 518.0,405.8 434.0,399.9" fill="#ba8b2c" />
<polygon points="517.3,402.1 487.1,412.1 488.4,415.9 518.6,405.8" fill="#3f2d07" />
<polygon points="517.3,402.1 487.1,412.1 487.7,413.8 517.9,403.8" fill="#a87c24" />
<polygon points="401.0,411.6 571.5,528.6 574.5,524.4 404.0,407.4" fill="#4d3408" />
<polygon points="401.0,411.6 571.5,528.6 573.1,526.4 402.6,409.4" fill="#ae8025" />
<polygon points="428.4,411.0 428.4,429.0 433.4,429.0 433.4,411.0" fill="#4d3408" />
<polygon points="428.4,411.0 428.4,429.0 431.0,429.0 431.0,411.0" fill="#ae8025" />
<polygon points="456.9,412.5 456.9,448.5 461.8,448.5 461.8,412.5" fill="#4d3408" />
<polygon points="456.9,412.5 456.9,448.5 459.4,448.5 459.4,412.5" fill="#ae8025" />
<polygon points="485.3,414.0 485.3,468.0 490.2,468.0 490.2,414.0" fill="#4d3408" />
<polygon points="485.3,414.0 485.3,468.0 487.8,468.0 487.8,414.0" fill="#ae8025" />
<polygon points="513.7,451.5 513.7,487.5 518.6,487.5 518.6,451.5" fill="#4d3408" />
<polygon points="513.7,451.5 513.7,487.5 516.3,487.5 516.3,451.5" fill="#ae8025" />
<polygon points="542.1,489.0 542.1,507.0 547.1,507.0 547.1,489.0" fill="#4d3408" />
<polygon points="542.1,489.0 542.1,507.0 544.7,507.0 544.7,489.0" fill="#ae8025" />
<polygon points="428.9,412.5 457.4,450.0 461.3,447.0 432.9,409.5" fill="#4d3408" />
<polygon points="428.9,412.5 457.4,450.0 459.4,448.4 431.0,410.9" fill="#ae8025" />
<polygon points="457.1,413.6 485.5,469.1 490.0,466.9 461.5,411.4" fill="#4d3408" />
<polygon points="457.1,413.6 485.5,469.1 487.8,468.0 459.4,412.5" fill="#ae8025" />
<polygon points="486.5,465.9 514.9,449.4 517.4,453.6 489.0,470.1" fill="#4d3408" />
<polygon points="486.5,465.9 514.9,449.4 516.2,451.6 487.8,468.1" fill="#ae8025" />
<polygon points="516.0,490.0 544.5,491.5 544.7,486.5 516.3,485.0" fill="#4d3408" />
<polygon points="516.0,490.0 544.5,491.5 544.6,488.9 516.2,487.4" fill="#ae8025" />
<polygon points="485.4,415.8 570.6,528.3 575.4,524.7 490.1,412.2" fill="#4d3408" />
<polygon points="485.4,415.8 570.6,528.3 573.1,526.4 487.8,413.9" fill="#ae8025" />
<polygon points="404.0,405.1 487.8,410.6 487.8,417.8 404.0,411.9" fill="#5a400e" />
<polygon points="404.0,405.1 487.8,410.6 487.8,415.9 404.0,410.0" fill="#ba8b2c" />
<polygon points="573.5,520.5 725.0,473.7 725.0,486.5 573.5,532.5" fill="#7e3c1f" />
<polygon points="573.5,520.5 725.0,473.7 725.0,475.5 573.5,522.4" fill="#9c5632" />
<circle cx="585.6" cy="522.8" r=".8" fill="#4a2410"/>
<circle cx="619.0" cy="512.6" r=".8" fill="#4a2410"/>
<circle cx="652.3" cy="502.5" r=".8" fill="#4a2410"/>
<circle cx="685.6" cy="492.3" r=".8" fill="#4a2410"/>
<circle cx="714.4" cy="483.5" r=".8" fill="#4a2410"/>
<polygon points="398.5,408.5 402.5,408.0 402.5,518.5 398.5,517.5" fill="#7c5217" />
<polygon points="402.5,408.0 406.5,409.0 406.5,517.5 402.5,518.5" fill="#4e3309" />
<polygon points="571.0,528.0 575.0,528.0 575.0,635.0 571.0,634.0" fill="#7c5217" />
<polygon points="575.0,528.0 579.5,527.0 579.5,634.0 575.0,635.0" fill="#4e3309" />
<polygon points="551.0,243.4 706.0,196.7 706.0,200.4 551.0,247.1" fill="#707070" />
<polygon points="551.0,247.1 706.0,200.4 706.0,212.1 551.0,259.6" fill="#595959" />
<polygon points="551.0,259.6 706.0,212.1 706.0,213.9 551.0,261.6" fill="#b4b4b4" />
<line x1="551.0" y1="243.4" x2="706.0" y2="196.7" stroke="#2c2c2c" stroke-width="0.9" />
<line x1="551.0" y1="247.1" x2="706.0" y2="200.4" stroke="#2c2c2c" stroke-width="0.9" />
<line x1="551.0" y1="259.6" x2="706.0" y2="212.1" stroke="#2c2c2c" stroke-width="0.8" />
<line x1="551.0" y1="261.7" x2="706.0" y2="214.0" stroke="#444" stroke-width="0.7" />
<polygon points="704.0,197.5 707.0,198.5 707.0,213.0 704.0,213.8" fill="#4c4c4c" />
<polygon points="805.0,167.7 977.5,253.5 977.5,257.9 805.0,172.1" fill="#747474" />
<polygon points="805.0,172.1 977.5,257.9 977.5,266.3 805.0,180.5" fill="#d3d3d3" />
<line x1="805.0" y1="167.7" x2="977.5" y2="253.5" stroke="#2c2c2c" stroke-width="0.9" />
<line x1="805.0" y1="172.1" x2="977.5" y2="257.9" stroke="#2c2c2c" stroke-width="0.9" />
<line x1="805.0" y1="180.9" x2="977.5" y2="266.7" stroke="#3a3a3a" stroke-width="1.1" />
<g stroke="#2727b4" stroke-width="0.7" fill="none" opacity="0.85">
<line x1="805.0" y1="153.0" x2="978.0" y2="229.5" stroke="#2727b4" stroke-width="0.8" />
<line x1="805.0" y1="153.0" x2="805.0" y2="171.3" stroke="#2727b4" stroke-width="0.7" />
<path d="M804.0 171.3L805.0 173.9L806.0 171.3z" fill="#2727b4" stroke="none"/>
<line x1="811.7" y1="155.9" x2="811.7" y2="174.6" stroke="#2727b4" stroke-width="0.7" />
<path d="M810.7 174.6L811.7 177.2L812.7 174.6z" fill="#2727b4" stroke="none"/>
<line x1="818.3" y1="158.9" x2="818.3" y2="177.9" stroke="#2727b4" stroke-width="0.7" />
<path d="M817.3 177.9L818.3 180.5L819.3 177.9z" fill="#2727b4" stroke="none"/>
<line x1="825.0" y1="161.8" x2="825.0" y2="181.2" stroke="#2727b4" stroke-width="0.7" />
<path d="M824.0 181.2L825.0 183.8L826.0 181.2z" fill="#2727b4" stroke="none"/>
<line x1="831.6" y1="164.8" x2="831.6" y2="184.5" stroke="#2727b4" stroke-width="0.7" />
<path d="M830.6 184.5L831.6 187.1L832.6 184.5z" fill="#2727b4" stroke="none"/>
<line x1="838.3" y1="167.7" x2="838.3" y2="187.8" stroke="#2727b4" stroke-width="0.7" />
<path d="M837.3 187.8L838.3 190.4L839.3 187.8z" fill="#2727b4" stroke="none"/>
<line x1="844.9" y1="170.7" x2="844.9" y2="191.1" stroke="#2727b4" stroke-width="0.7" />
<path d="M843.9 191.1L844.9 193.7L845.9 191.1z" fill="#2727b4" stroke="none"/>
<line x1="851.6" y1="173.6" x2="851.6" y2="194.4" stroke="#2727b4" stroke-width="0.7" />
<path d="M850.6 194.4L851.6 197.0L852.6 194.4z" fill="#2727b4" stroke="none"/>
<line x1="858.2" y1="176.5" x2="858.2" y2="197.7" stroke="#2727b4" stroke-width="0.7" />
<path d="M857.2 197.7L858.2 200.3L859.2 197.7z" fill="#2727b4" stroke="none"/>
<line x1="864.9" y1="179.5" x2="864.9" y2="201.0" stroke="#2727b4" stroke-width="0.7" />
<path d="M863.9 201.0L864.9 203.6L865.9 201.0z" fill="#2727b4" stroke="none"/>
<line x1="871.5" y1="182.4" x2="871.5" y2="204.3" stroke="#2727b4" stroke-width="0.7" />
<path d="M870.5 204.3L871.5 206.9L872.5 204.3z" fill="#2727b4" stroke="none"/>
<line x1="878.2" y1="185.4" x2="878.2" y2="207.6" stroke="#2727b4" stroke-width="0.7" />
<path d="M877.2 207.6L878.2 210.2L879.2 207.6z" fill="#2727b4" stroke="none"/>
<line x1="884.8" y1="188.3" x2="884.8" y2="210.9" stroke="#2727b4" stroke-width="0.7" />
<path d="M883.8 210.9L884.8 213.5L885.8 210.9z" fill="#2727b4" stroke="none"/>
<line x1="891.5" y1="191.2" x2="891.5" y2="214.2" stroke="#2727b4" stroke-width="0.7" />
<path d="M890.5 214.2L891.5 216.8L892.5 214.2z" fill="#2727b4" stroke="none"/>
<line x1="898.2" y1="194.2" x2="898.2" y2="217.5" stroke="#2727b4" stroke-width="0.7" />
<path d="M897.2 217.5L898.2 220.1L899.2 217.5z" fill="#2727b4" stroke="none"/>
<line x1="904.8" y1="197.1" x2="904.8" y2="220.8" stroke="#2727b4" stroke-width="0.7" />
<path d="M903.8 220.8L904.8 223.4L905.8 220.8z" fill="#2727b4" stroke="none"/>
<line x1="911.5" y1="200.1" x2="911.5" y2="224.1" stroke="#2727b4" stroke-width="0.7" />
<path d="M910.5 224.1L911.5 226.7L912.5 224.1z" fill="#2727b4" stroke="none"/>
<line x1="918.1" y1="203.0" x2="918.1" y2="227.4" stroke="#2727b4" stroke-width="0.7" />
<path d="M917.1 227.4L918.1 230.0L919.1 227.4z" fill="#2727b4" stroke="none"/>
<line x1="924.8" y1="206.0" x2="924.8" y2="230.7" stroke="#2727b4" stroke-width="0.7" />
<path d="M923.8 230.7L924.8 233.3L925.8 230.7z" fill="#2727b4" stroke="none"/>
<line x1="931.4" y1="208.9" x2="931.4" y2="234.0" stroke="#2727b4" stroke-width="0.7" />
<path d="M930.4 234.0L931.4 236.6L932.4 234.0z" fill="#2727b4" stroke="none"/>
<line x1="938.1" y1="211.8" x2="938.1" y2="237.3" stroke="#2727b4" stroke-width="0.7" />
<path d="M937.1 237.3L938.1 239.9L939.1 237.3z" fill="#2727b4" stroke="none"/>
<line x1="944.7" y1="214.8" x2="944.7" y2="240.6" stroke="#2727b4" stroke-width="0.7" />
<path d="M943.7 240.6L944.7 243.2L945.7 240.6z" fill="#2727b4" stroke="none"/>
<line x1="951.4" y1="217.7" x2="951.4" y2="243.9" stroke="#2727b4" stroke-width="0.7" />
<path d="M950.4 243.9L951.4 246.5L952.4 243.9z" fill="#2727b4" stroke="none"/>
<line x1="958.0" y1="220.7" x2="958.0" y2="247.2" stroke="#2727b4" stroke-width="0.7" />
<path d="M957.0 247.2L958.0 249.8L959.0 247.2z" fill="#2727b4" stroke="none"/>
<line x1="964.7" y1="223.6" x2="964.7" y2="250.5" stroke="#2727b4" stroke-width="0.7" />
<path d="M963.7 250.5L964.7 253.1L965.7 250.5z" fill="#2727b4" stroke="none"/>
<line x1="971.3" y1="226.6" x2="971.3" y2="253.8" stroke="#2727b4" stroke-width="0.7" />
<path d="M970.3 253.8L971.3 256.4L972.3 253.8z" fill="#2727b4" stroke="none"/>
<line x1="978.0" y1="229.5" x2="978.0" y2="257.1" stroke="#2727b4" stroke-width="0.7" />
<path d="M977.0 257.1L978.0 259.7L979.0 257.1z" fill="#2727b4" stroke="none"/>
</g>
<polygon points="747.0,186.5 920.0,272.1 920.0,276.5 747.0,190.9" fill="#747474" />
<polygon points="747.0,190.9 920.0,276.5 920.0,284.9 747.0,199.3" fill="#d3d3d3" />
<line x1="747.0" y1="186.5" x2="920.0" y2="272.1" stroke="#2c2c2c" stroke-width="0.9" />
<line x1="747.0" y1="190.9" x2="920.0" y2="276.5" stroke="#2c2c2c" stroke-width="0.9" />
<line x1="747.0" y1="199.7" x2="920.0" y2="285.3" stroke="#3a3a3a" stroke-width="1.1" />
<g stroke="#782b80" stroke-width="0.7" fill="none" opacity="0.85">
<line x1="747.0" y1="172.0" x2="920.0" y2="248.0" stroke="#782b80" stroke-width="0.8" />
<line x1="747.0" y1="172.0" x2="747.0" y2="190.1" stroke="#782b80" stroke-width="0.7" />
<path d="M746.0 190.1L747.0 192.7L748.0 190.1z" fill="#782b80" stroke="none"/>
<line x1="753.7" y1="174.9" x2="753.7" y2="193.4" stroke="#782b80" stroke-width="0.7" />
<path d="M752.7 193.4L753.7 196.0L754.7 193.4z" fill="#782b80" stroke="none"/>
<line x1="760.3" y1="177.8" x2="760.3" y2="196.7" stroke="#782b80" stroke-width="0.7" />
<path d="M759.3 196.7L760.3 199.3L761.3 196.7z" fill="#782b80" stroke="none"/>
<line x1="767.0" y1="180.8" x2="767.0" y2="200.0" stroke="#782b80" stroke-width="0.7" />
<path d="M766.0 200.0L767.0 202.6L768.0 200.0z" fill="#782b80" stroke="none"/>
<line x1="773.6" y1="183.7" x2="773.6" y2="203.3" stroke="#782b80" stroke-width="0.7" />
<path d="M772.6 203.3L773.6 205.9L774.6 203.3z" fill="#782b80" stroke="none"/>
<line x1="780.3" y1="186.6" x2="780.3" y2="206.6" stroke="#782b80" stroke-width="0.7" />
<path d="M779.3 206.6L780.3 209.2L781.3 206.6z" fill="#782b80" stroke="none"/>
<line x1="786.9" y1="189.5" x2="786.9" y2="209.9" stroke="#782b80" stroke-width="0.7" />
<path d="M785.9 209.9L786.9 212.5L787.9 209.9z" fill="#782b80" stroke="none"/>
<line x1="793.6" y1="192.5" x2="793.6" y2="213.1" stroke="#782b80" stroke-width="0.7" />
<path d="M792.6 213.1L793.6 215.7L794.6 213.1z" fill="#782b80" stroke="none"/>
<line x1="800.2" y1="195.4" x2="800.2" y2="216.4" stroke="#782b80" stroke-width="0.7" />
<path d="M799.2 216.4L800.2 219.0L801.2 216.4z" fill="#782b80" stroke="none"/>
<line x1="806.9" y1="198.3" x2="806.9" y2="219.7" stroke="#782b80" stroke-width="0.7" />
<path d="M805.9 219.7L806.9 222.3L807.9 219.7z" fill="#782b80" stroke="none"/>
<line x1="813.5" y1="201.2" x2="813.5" y2="223.0" stroke="#782b80" stroke-width="0.7" />
<path d="M812.5 223.0L813.5 225.6L814.5 223.0z" fill="#782b80" stroke="none"/>
<line x1="820.2" y1="204.2" x2="820.2" y2="226.3" stroke="#782b80" stroke-width="0.7" />
<path d="M819.2 226.3L820.2 228.9L821.2 226.3z" fill="#782b80" stroke="none"/>
<line x1="826.8" y1="207.1" x2="826.8" y2="229.6" stroke="#782b80" stroke-width="0.7" />
<path d="M825.8 229.6L826.8 232.2L827.8 229.6z" fill="#782b80" stroke="none"/>
<line x1="833.5" y1="210.0" x2="833.5" y2="232.9" stroke="#782b80" stroke-width="0.7" />
<path d="M832.5 232.9L833.5 235.5L834.5 232.9z" fill="#782b80" stroke="none"/>
<line x1="840.2" y1="212.9" x2="840.2" y2="236.2" stroke="#782b80" stroke-width="0.7" />
<path d="M839.2 236.2L840.2 238.8L841.2 236.2z" fill="#782b80" stroke="none"/>
<line x1="846.8" y1="215.8" x2="846.8" y2="239.5" stroke="#782b80" stroke-width="0.7" />
<path d="M845.8 239.5L846.8 242.1L847.8 239.5z" fill="#782b80" stroke="none"/>
<line x1="853.5" y1="218.8" x2="853.5" y2="242.8" stroke="#782b80" stroke-width="0.7" />
<path d="M852.5 242.8L853.5 245.4L854.5 242.8z" fill="#782b80" stroke="none"/>
<line x1="860.1" y1="221.7" x2="860.1" y2="246.1" stroke="#782b80" stroke-width="0.7" />
<path d="M859.1 246.1L860.1 248.7L861.1 246.1z" fill="#782b80" stroke="none"/>
<line x1="866.8" y1="224.6" x2="866.8" y2="249.4" stroke="#782b80" stroke-width="0.7" />
<path d="M865.8 249.4L866.8 252.0L867.8 249.4z" fill="#782b80" stroke="none"/>
<line x1="873.4" y1="227.5" x2="873.4" y2="252.7" stroke="#782b80" stroke-width="0.7" />
<path d="M872.4 252.7L873.4 255.3L874.4 252.7z" fill="#782b80" stroke="none"/>
<line x1="880.1" y1="230.5" x2="880.1" y2="255.9" stroke="#782b80" stroke-width="0.7" />
<path d="M879.1 255.9L880.1 258.5L881.1 255.9z" fill="#782b80" stroke="none"/>
<line x1="886.7" y1="233.4" x2="886.7" y2="259.2" stroke="#782b80" stroke-width="0.7" />
<path d="M885.7 259.2L886.7 261.8L887.7 259.2z" fill="#782b80" stroke="none"/>
<line x1="893.4" y1="236.3" x2="893.4" y2="262.5" stroke="#782b80" stroke-width="0.7" />
<path d="M892.4 262.5L893.4 265.1L894.4 262.5z" fill="#782b80" stroke="none"/>
<line x1="900.0" y1="239.2" x2="900.0" y2="265.8" stroke="#782b80" stroke-width="0.7" />
<path d="M899.0 265.8L900.0 268.4L901.0 265.8z" fill="#782b80" stroke="none"/>
<line x1="906.7" y1="242.2" x2="906.7" y2="269.1" stroke="#782b80" stroke-width="0.7" />
<path d="M905.7 269.1L906.7 271.7L907.7 269.1z" fill="#782b80" stroke="none"/>
<line x1="913.3" y1="245.1" x2="913.3" y2="272.4" stroke="#782b80" stroke-width="0.7" />
<path d="M912.3 272.4L913.3 275.0L914.3 272.4z" fill="#782b80" stroke="none"/>
<line x1="920.0" y1="248.0" x2="920.0" y2="275.7" stroke="#782b80" stroke-width="0.7" />
<path d="M919.0 275.7L920.0 278.3L921.0 275.7z" fill="#782b80" stroke="none"/>
</g>
<polygon points="682.0,209.0 854.5,293.4 854.5,297.8 682.0,213.4" fill="#747474" />
<polygon points="682.0,213.4 854.5,297.8 854.5,306.2 682.0,221.8" fill="#d3d3d3" />
<line x1="682.0" y1="209.0" x2="854.5" y2="293.4" stroke="#2c2c2c" stroke-width="0.9" />
<line x1="682.0" y1="213.4" x2="854.5" y2="297.8" stroke="#2c2c2c" stroke-width="0.9" />
<line x1="682.0" y1="222.2" x2="854.5" y2="306.6" stroke="#3a3a3a" stroke-width="1.1" />
<g stroke="#782b80" stroke-width="0.7" fill="none" opacity="0.85">
<line x1="682.0" y1="192.5" x2="854.5" y2="268.7" stroke="#782b80" stroke-width="0.8" />
<line x1="682.0" y1="192.5" x2="682.0" y2="212.6" stroke="#782b80" stroke-width="0.7" />
<path d="M681.0 212.6L682.0 215.2L683.0 212.6z" fill="#782b80" stroke="none"/>
<line x1="688.6" y1="195.4" x2="688.6" y2="215.8" stroke="#782b80" stroke-width="0.7" />
<path d="M687.6 215.8L688.6 218.4L689.6 215.8z" fill="#782b80" stroke="none"/>
<line x1="695.3" y1="198.4" x2="695.3" y2="219.1" stroke="#782b80" stroke-width="0.7" />
<path d="M694.3 219.1L695.3 221.7L696.3 219.1z" fill="#782b80" stroke="none"/>
<line x1="701.9" y1="201.3" x2="701.9" y2="222.3" stroke="#782b80" stroke-width="0.7" />
<path d="M700.9 222.3L701.9 224.9L702.9 222.3z" fill="#782b80" stroke="none"/>
<line x1="708.5" y1="204.2" x2="708.5" y2="225.6" stroke="#782b80" stroke-width="0.7" />
<path d="M707.5 225.6L708.5 228.2L709.5 225.6z" fill="#782b80" stroke="none"/>
<line x1="715.2" y1="207.2" x2="715.2" y2="228.8" stroke="#782b80" stroke-width="0.7" />
<path d="M714.2 228.8L715.2 231.4L716.2 228.8z" fill="#782b80" stroke="none"/>
<line x1="721.8" y1="210.1" x2="721.8" y2="232.1" stroke="#782b80" stroke-width="0.7" />
<path d="M720.8 232.1L721.8 234.7L722.8 232.1z" fill="#782b80" stroke="none"/>
<line x1="728.4" y1="213.0" x2="728.4" y2="235.3" stroke="#782b80" stroke-width="0.7" />
<path d="M727.4 235.3L728.4 237.9L729.4 235.3z" fill="#782b80" stroke="none"/>
<line x1="735.1" y1="215.9" x2="735.1" y2="238.6" stroke="#782b80" stroke-width="0.7" />
<path d="M734.1 238.6L735.1 241.2L736.1 238.6z" fill="#782b80" stroke="none"/>
<line x1="741.7" y1="218.9" x2="741.7" y2="241.8" stroke="#782b80" stroke-width="0.7" />
<path d="M740.7 241.8L741.7 244.4L742.7 241.8z" fill="#782b80" stroke="none"/>
<line x1="748.3" y1="221.8" x2="748.3" y2="245.1" stroke="#782b80" stroke-width="0.7" />
<path d="M747.3 245.1L748.3 247.7L749.3 245.1z" fill="#782b80" stroke="none"/>
<line x1="755.0" y1="224.7" x2="755.0" y2="248.3" stroke="#782b80" stroke-width="0.7" />
<path d="M754.0 248.3L755.0 250.9L756.0 248.3z" fill="#782b80" stroke="none"/>
<line x1="761.6" y1="227.7" x2="761.6" y2="251.6" stroke="#782b80" stroke-width="0.7" />
<path d="M760.6 251.6L761.6 254.2L762.6 251.6z" fill="#782b80" stroke="none"/>
<line x1="768.2" y1="230.6" x2="768.2" y2="254.8" stroke="#782b80" stroke-width="0.7" />
<path d="M767.2 254.8L768.2 257.4L769.2 254.8z" fill="#782b80" stroke="none"/>
<line x1="774.9" y1="233.5" x2="774.9" y2="258.0" stroke="#782b80" stroke-width="0.7" />
<path d="M773.9 258.0L774.9 260.6L775.9 258.0z" fill="#782b80" stroke="none"/>
<line x1="781.5" y1="236.5" x2="781.5" y2="261.3" stroke="#782b80" stroke-width="0.7" />
<path d="M780.5 261.3L781.5 263.9L782.5 261.3z" fill="#782b80" stroke="none"/>
<line x1="788.2" y1="239.4" x2="788.2" y2="264.5" stroke="#782b80" stroke-width="0.7" />
<path d="M787.2 264.5L788.2 267.1L789.2 264.5z" fill="#782b80" stroke="none"/>
<line x1="794.8" y1="242.3" x2="794.8" y2="267.8" stroke="#782b80" stroke-width="0.7" />
<path d="M793.8 267.8L794.8 270.4L795.8 267.8z" fill="#782b80" stroke="none"/>
<line x1="801.4" y1="245.3" x2="801.4" y2="271.0" stroke="#782b80" stroke-width="0.7" />
<path d="M800.4 271.0L801.4 273.6L802.4 271.0z" fill="#782b80" stroke="none"/>
<line x1="808.1" y1="248.2" x2="808.1" y2="274.3" stroke="#782b80" stroke-width="0.7" />
<path d="M807.1 274.3L808.1 276.9L809.1 274.3z" fill="#782b80" stroke="none"/>
<line x1="814.7" y1="251.1" x2="814.7" y2="277.5" stroke="#782b80" stroke-width="0.7" />
<path d="M813.7 277.5L814.7 280.1L815.7 277.5z" fill="#782b80" stroke="none"/>
<line x1="821.3" y1="254.0" x2="821.3" y2="280.8" stroke="#782b80" stroke-width="0.7" />
<path d="M820.3 280.8L821.3 283.4L822.3 280.8z" fill="#782b80" stroke="none"/>
<line x1="828.0" y1="257.0" x2="828.0" y2="284.0" stroke="#782b80" stroke-width="0.7" />
<path d="M827.0 284.0L828.0 286.6L829.0 284.0z" fill="#782b80" stroke="none"/>
<line x1="834.6" y1="259.9" x2="834.6" y2="287.3" stroke="#782b80" stroke-width="0.7" />
<path d="M833.6 287.3L834.6 289.9L835.6 287.3z" fill="#782b80" stroke="none"/>
<line x1="841.2" y1="262.8" x2="841.2" y2="290.5" stroke="#782b80" stroke-width="0.7" />
<path d="M840.2 290.5L841.2 293.1L842.2 290.5z" fill="#782b80" stroke="none"/>
<line x1="847.9" y1="265.8" x2="847.9" y2="293.8" stroke="#782b80" stroke-width="0.7" />
<path d="M846.9 293.8L847.9 296.4L848.9 293.8z" fill="#782b80" stroke="none"/>
<line x1="854.5" y1="268.7" x2="854.5" y2="297.0" stroke="#782b80" stroke-width="0.7" />
<path d="M853.5 297.0L854.5 299.6L855.5 297.0z" fill="#782b80" stroke="none"/>
</g>
<polygon points="616.5,230.0 786.0,315.6 786.0,320.0 616.5,234.4" fill="#747474" />
<polygon points="616.5,234.4 786.0,320.0 786.0,328.4 616.5,242.8" fill="#d3d3d3" />
<line x1="616.5" y1="230.0" x2="786.0" y2="315.6" stroke="#2c2c2c" stroke-width="0.9" />
<line x1="616.5" y1="234.4" x2="786.0" y2="320.0" stroke="#2c2c2c" stroke-width="0.9" />
<line x1="616.5" y1="243.2" x2="786.0" y2="328.8" stroke="#3a3a3a" stroke-width="1.1" />
<g stroke="#782b80" stroke-width="0.7" fill="none" opacity="0.85">
<line x1="616.5" y1="213.7" x2="786.0" y2="290.6" stroke="#782b80" stroke-width="0.8" />
<line x1="616.5" y1="213.7" x2="616.5" y2="233.6" stroke="#782b80" stroke-width="0.7" />
<path d="M615.5 233.6L616.5 236.2L617.5 233.6z" fill="#782b80" stroke="none"/>
<line x1="623.0" y1="216.7" x2="623.0" y2="236.9" stroke="#782b80" stroke-width="0.7" />
<path d="M622.0 236.9L623.0 239.5L624.0 236.9z" fill="#782b80" stroke="none"/>
<line x1="629.5" y1="219.6" x2="629.5" y2="240.2" stroke="#782b80" stroke-width="0.7" />
<path d="M628.5 240.2L629.5 242.8L630.5 240.2z" fill="#782b80" stroke="none"/>
<line x1="636.1" y1="222.6" x2="636.1" y2="243.5" stroke="#782b80" stroke-width="0.7" />
<path d="M635.1 243.5L636.1 246.1L637.1 243.5z" fill="#782b80" stroke="none"/>
<line x1="642.6" y1="225.5" x2="642.6" y2="246.8" stroke="#782b80" stroke-width="0.7" />
<path d="M641.6 246.8L642.6 249.4L643.6 246.8z" fill="#782b80" stroke="none"/>
<line x1="649.1" y1="228.5" x2="649.1" y2="250.1" stroke="#782b80" stroke-width="0.7" />
<path d="M648.1 250.1L649.1 252.7L650.1 250.1z" fill="#782b80" stroke="none"/>
<line x1="655.6" y1="231.4" x2="655.6" y2="253.4" stroke="#782b80" stroke-width="0.7" />
<path d="M654.6 253.4L655.6 256.0L656.6 253.4z" fill="#782b80" stroke="none"/>
<line x1="662.1" y1="234.4" x2="662.1" y2="256.6" stroke="#782b80" stroke-width="0.7" />
<path d="M661.1 256.6L662.1 259.2L663.1 256.6z" fill="#782b80" stroke="none"/>
<line x1="668.7" y1="237.4" x2="668.7" y2="259.9" stroke="#782b80" stroke-width="0.7" />
<path d="M667.7 259.9L668.7 262.5L669.7 259.9z" fill="#782b80" stroke="none"/>
<line x1="675.2" y1="240.3" x2="675.2" y2="263.2" stroke="#782b80" stroke-width="0.7" />
<path d="M674.2 263.2L675.2 265.8L676.2 263.2z" fill="#782b80" stroke="none"/>
<line x1="681.7" y1="243.3" x2="681.7" y2="266.5" stroke="#782b80" stroke-width="0.7" />
<path d="M680.7 266.5L681.7 269.1L682.7 266.5z" fill="#782b80" stroke="none"/>
<line x1="688.2" y1="246.2" x2="688.2" y2="269.8" stroke="#782b80" stroke-width="0.7" />
<path d="M687.2 269.8L688.2 272.4L689.2 269.8z" fill="#782b80" stroke="none"/>
<line x1="694.7" y1="249.2" x2="694.7" y2="273.1" stroke="#782b80" stroke-width="0.7" />
<path d="M693.7 273.1L694.7 275.7L695.7 273.1z" fill="#782b80" stroke="none"/>
<line x1="701.2" y1="252.2" x2="701.2" y2="276.4" stroke="#782b80" stroke-width="0.7" />
<path d="M700.2 276.4L701.2 279.0L702.2 276.4z" fill="#782b80" stroke="none"/>
<line x1="707.8" y1="255.1" x2="707.8" y2="279.7" stroke="#782b80" stroke-width="0.7" />
<path d="M706.8 279.7L707.8 282.3L708.8 279.7z" fill="#782b80" stroke="none"/>
<line x1="714.3" y1="258.1" x2="714.3" y2="283.0" stroke="#782b80" stroke-width="0.7" />
<path d="M713.3 283.0L714.3 285.6L715.3 283.0z" fill="#782b80" stroke="none"/>
<line x1="720.8" y1="261.0" x2="720.8" y2="286.3" stroke="#782b80" stroke-width="0.7" />
<path d="M719.8 286.3L720.8 288.9L721.8 286.3z" fill="#782b80" stroke="none"/>
<line x1="727.3" y1="264.0" x2="727.3" y2="289.6" stroke="#782b80" stroke-width="0.7" />
<path d="M726.3 289.6L727.3 292.2L728.3 289.6z" fill="#782b80" stroke="none"/>
<line x1="733.8" y1="266.9" x2="733.8" y2="292.9" stroke="#782b80" stroke-width="0.7" />
<path d="M732.8 292.9L733.8 295.5L734.8 292.9z" fill="#782b80" stroke="none"/>
<line x1="740.4" y1="269.9" x2="740.4" y2="296.2" stroke="#782b80" stroke-width="0.7" />
<path d="M739.4 296.2L740.4 298.8L741.4 296.2z" fill="#782b80" stroke="none"/>
<line x1="746.9" y1="272.9" x2="746.9" y2="299.4" stroke="#782b80" stroke-width="0.7" />
<path d="M745.9 299.4L746.9 302.0L747.9 299.4z" fill="#782b80" stroke="none"/>
<line x1="753.4" y1="275.8" x2="753.4" y2="302.7" stroke="#782b80" stroke-width="0.7" />
<path d="M752.4 302.7L753.4 305.3L754.4 302.7z" fill="#782b80" stroke="none"/>
<line x1="759.9" y1="278.8" x2="759.9" y2="306.0" stroke="#782b80" stroke-width="0.7" />
<path d="M758.9 306.0L759.9 308.6L760.9 306.0z" fill="#782b80" stroke="none"/>
<line x1="766.4" y1="281.7" x2="766.4" y2="309.3" stroke="#782b80" stroke-width="0.7" />
<path d="M765.4 309.3L766.4 311.9L767.4 309.3z" fill="#782b80" stroke="none"/>
<line x1="773.0" y1="284.7" x2="773.0" y2="312.6" stroke="#782b80" stroke-width="0.7" />
<path d="M772.0 312.6L773.0 315.2L774.0 312.6z" fill="#782b80" stroke="none"/>
<line x1="779.5" y1="287.6" x2="779.5" y2="315.9" stroke="#782b80" stroke-width="0.7" />
<path d="M778.5 315.9L779.5 318.5L780.5 315.9z" fill="#782b80" stroke="none"/>
<line x1="786.0" y1="290.6" x2="786.0" y2="319.2" stroke="#782b80" stroke-width="0.7" />
<path d="M785.0 319.2L786.0 321.8L787.0 319.2z" fill="#782b80" stroke="none"/>
</g>
<polygon points="552.0,247.0 726.0,335.7 726.0,340.1 552.0,251.4" fill="#747474" />
<polygon points="552.0,251.4 726.0,340.1 726.0,348.5 552.0,259.8" fill="#d3d3d3" />
<line x1="552.0" y1="247.0" x2="726.0" y2="335.7" stroke="#2c2c2c" stroke-width="0.9" />
<line x1="552.0" y1="251.4" x2="726.0" y2="340.1" stroke="#2c2c2c" stroke-width="0.9" />
<line x1="552.0" y1="260.2" x2="726.0" y2="348.9" stroke="#3a3a3a" stroke-width="1.1" />
<g stroke="#2727b4" stroke-width="0.7" fill="none" opacity="0.85">
<line x1="553.0" y1="233.0" x2="725.5" y2="310.5" stroke="#2727b4" stroke-width="0.8" />
<line x1="553.0" y1="233.0" x2="553.0" y2="250.6" stroke="#2727b4" stroke-width="0.7" />
<path d="M552.0 250.6L553.0 253.2L554.0 250.6z" fill="#2727b4" stroke="none"/>
<line x1="559.6" y1="236.0" x2="559.6" y2="254.0" stroke="#2727b4" stroke-width="0.7" />
<path d="M558.6 254.0L559.6 256.6L560.6 254.0z" fill="#2727b4" stroke="none"/>
<line x1="566.3" y1="239.0" x2="566.3" y2="257.4" stroke="#2727b4" stroke-width="0.7" />
<path d="M565.3 257.4L566.3 260.0L567.3 257.4z" fill="#2727b4" stroke="none"/>
<line x1="572.9" y1="241.9" x2="572.9" y2="260.8" stroke="#2727b4" stroke-width="0.7" />
<path d="M571.9 260.8L572.9 263.4L573.9 260.8z" fill="#2727b4" stroke="none"/>
<line x1="579.5" y1="244.9" x2="579.5" y2="264.2" stroke="#2727b4" stroke-width="0.7" />
<path d="M578.5 264.2L579.5 266.8L580.5 264.2z" fill="#2727b4" stroke="none"/>
<line x1="586.2" y1="247.9" x2="586.2" y2="267.7" stroke="#2727b4" stroke-width="0.7" />
<path d="M585.2 267.7L586.2 270.3L587.2 267.7z" fill="#2727b4" stroke="none"/>
<line x1="592.8" y1="250.9" x2="592.8" y2="271.1" stroke="#2727b4" stroke-width="0.7" />
<path d="M591.8 271.1L592.8 273.7L593.8 271.1z" fill="#2727b4" stroke="none"/>
<line x1="599.4" y1="253.9" x2="599.4" y2="274.5" stroke="#2727b4" stroke-width="0.7" />
<path d="M598.4 274.5L599.4 277.1L600.4 274.5z" fill="#2727b4" stroke="none"/>
<line x1="606.1" y1="256.8" x2="606.1" y2="277.9" stroke="#2727b4" stroke-width="0.7" />
<path d="M605.1 277.9L606.1 280.5L607.1 277.9z" fill="#2727b4" stroke="none"/>
<line x1="612.7" y1="259.8" x2="612.7" y2="281.3" stroke="#2727b4" stroke-width="0.7" />
<path d="M611.7 281.3L612.7 283.9L613.7 281.3z" fill="#2727b4" stroke="none"/>
<line x1="619.3" y1="262.8" x2="619.3" y2="284.7" stroke="#2727b4" stroke-width="0.7" />
<path d="M618.3 284.7L619.3 287.3L620.3 284.7z" fill="#2727b4" stroke="none"/>
<line x1="626.0" y1="265.8" x2="626.0" y2="288.1" stroke="#2727b4" stroke-width="0.7" />
<path d="M625.0 288.1L626.0 290.7L627.0 288.1z" fill="#2727b4" stroke="none"/>
<line x1="632.6" y1="268.8" x2="632.6" y2="291.5" stroke="#2727b4" stroke-width="0.7" />
<path d="M631.6 291.5L632.6 294.1L633.6 291.5z" fill="#2727b4" stroke="none"/>
<line x1="639.2" y1="271.8" x2="639.2" y2="295.0" stroke="#2727b4" stroke-width="0.7" />
<path d="M638.2 295.0L639.2 297.6L640.2 295.0z" fill="#2727b4" stroke="none"/>
<line x1="645.9" y1="274.7" x2="645.9" y2="298.4" stroke="#2727b4" stroke-width="0.7" />
<path d="M644.9 298.4L645.9 301.0L646.9 298.4z" fill="#2727b4" stroke="none"/>
<line x1="652.5" y1="277.7" x2="652.5" y2="301.8" stroke="#2727b4" stroke-width="0.7" />
<path d="M651.5 301.8L652.5 304.4L653.5 301.8z" fill="#2727b4" stroke="none"/>
<line x1="659.2" y1="280.7" x2="659.2" y2="305.2" stroke="#2727b4" stroke-width="0.7" />
<path d="M658.2 305.2L659.2 307.8L660.2 305.2z" fill="#2727b4" stroke="none"/>
<line x1="665.8" y1="283.7" x2="665.8" y2="308.6" stroke="#2727b4" stroke-width="0.7" />
<path d="M664.8 308.6L665.8 311.2L666.8 308.6z" fill="#2727b4" stroke="none"/>
<line x1="672.4" y1="286.7" x2="672.4" y2="312.0" stroke="#2727b4" stroke-width="0.7" />
<path d="M671.4 312.0L672.4 314.6L673.4 312.0z" fill="#2727b4" stroke="none"/>
<line x1="679.1" y1="289.6" x2="679.1" y2="315.4" stroke="#2727b4" stroke-width="0.7" />
<path d="M678.1 315.4L679.1 318.0L680.1 315.4z" fill="#2727b4" stroke="none"/>
<line x1="685.7" y1="292.6" x2="685.7" y2="318.8" stroke="#2727b4" stroke-width="0.7" />
<path d="M684.7 318.8L685.7 321.4L686.7 318.8z" fill="#2727b4" stroke="none"/>
<line x1="692.3" y1="295.6" x2="692.3" y2="322.2" stroke="#2727b4" stroke-width="0.7" />
<path d="M691.3 322.2L692.3 324.8L693.3 322.2z" fill="#2727b4" stroke="none"/>
<line x1="699.0" y1="298.6" x2="699.0" y2="325.7" stroke="#2727b4" stroke-width="0.7" />
<path d="M698.0 325.7L699.0 328.3L700.0 325.7z" fill="#2727b4" stroke="none"/>
<line x1="705.6" y1="301.6" x2="705.6" y2="329.1" stroke="#2727b4" stroke-width="0.7" />
<path d="M704.6 329.1L705.6 331.7L706.6 329.1z" fill="#2727b4" stroke="none"/>
<line x1="712.2" y1="304.5" x2="712.2" y2="332.5" stroke="#2727b4" stroke-width="0.7" />
<path d="M711.2 332.5L712.2 335.1L713.2 332.5z" fill="#2727b4" stroke="none"/>
<line x1="718.9" y1="307.5" x2="718.9" y2="335.9" stroke="#2727b4" stroke-width="0.7" />
<path d="M717.9 335.9L718.9 338.5L719.9 335.9z" fill="#2727b4" stroke="none"/>
<line x1="725.5" y1="310.5" x2="725.5" y2="339.3" stroke="#2727b4" stroke-width="0.7" />
<path d="M724.5 339.3L725.5 341.9L726.5 339.3z" fill="#2727b4" stroke="none"/>
</g>
<polygon points="724.0,336.6 981.0,253.5 981.0,256.9 724.0,339.9" fill="#8a8a8a" />
<polygon points="724.0,339.9 981.0,256.9 981.0,268.7 724.0,349.2" fill="#5b5b5b" />
<polygon points="724.0,349.2 981.0,268.7 981.0,272.1 724.0,352.2" fill="#c2c2c2" />
<line x1="724.0" y1="336.6" x2="981.0" y2="253.5" stroke="#2c2c2c" stroke-width="0.9" />
<line x1="724.0" y1="339.9" x2="981.0" y2="256.9" stroke="#2c2c2c" stroke-width="0.9" />
<line x1="724.0" y1="349.2" x2="981.0" y2="268.7" stroke="#2c2c2c" stroke-width="0.8" />
<line x1="724.0" y1="352.2" x2="981.0" y2="272.1" stroke="#333" stroke-width="0.9" />
<path d="M789 321.1v5M787.5 326.1h3" stroke="#1c1c1c" stroke-width=".8" fill="none"/>
<path d="M855 299.7v5M853.5 304.7h3" stroke="#1c1c1c" stroke-width=".8" fill="none"/>
<path d="M920.5 278.6v5M919.0 283.6h3" stroke="#1c1c1c" stroke-width=".8" fill="none"/>
<polygon points="720.5,342.0 725.5,340.0 725.5,480.0 720.5,479.0" fill="#c6c6c6" />
<polygon points="725.5,340.0 731.0,342.0 731.0,479.0 725.5,480.0" fill="#636363" />
<text x="553.5" y="234" font-size="5.800" fill="#2727b4">-0.15 k/ft</text>
<text x="617" y="214" font-size="5.800" fill="#782b80">-0.15 k/ft</text>
<text x="683" y="194" font-size="5.800" fill="#782b80">-0.15 k/ft</text>
<text x="748" y="173" font-size="5.800" fill="#782b80">-0.15 k/ft</text>
<text x="806" y="154.5" font-size="5.800" fill="#2727b4">-0.15 k/ft</text>
<text x="979.5" y="231.5" font-size="5.800" fill="#2727b4">-0.25 k/ft</text>
<text x="921.5" y="250" font-size="5.800" fill="#782b80">-0.25</text>
<text x="856.5" y="270.5" font-size="5.800" fill="#782b80">-0.25 k/ft</text>
</svg>
</div>
</body>
</html>
